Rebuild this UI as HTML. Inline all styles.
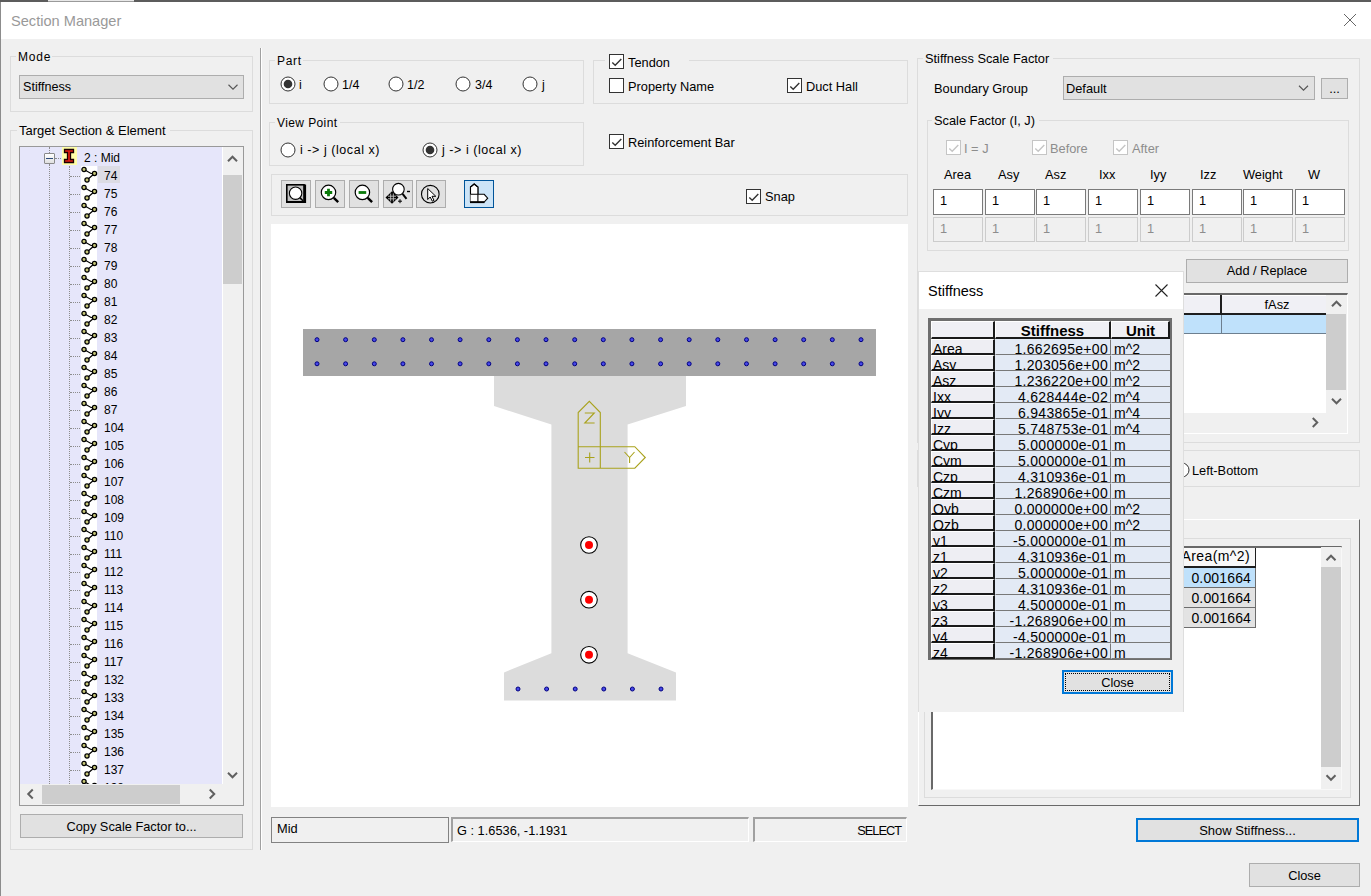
<!DOCTYPE html><html><head><meta charset="utf-8"><style>
html,body{margin:0;padding:0;}
body{width:1371px;height:896px;position:relative;overflow:hidden;background:#f0f0f0;font-family:"Liberation Sans",sans-serif;color:#000;}
.a{position:absolute;}
.t{white-space:nowrap;}
svg{overflow:visible;}
</style></head><body>
<div class="a" style="left:0px;top:0px;width:1371px;height:2px;background:#5c5c5c"></div>
<div class="a" style="left:48px;top:0px;width:86px;height:1px;background:#e8e8e8"></div>
<div class="a" style="left:48px;top:1px;width:86px;height:1px;background:#9a9a9a"></div>
<div class="a" style="left:1px;top:2px;width:1370px;height:37px;background:#fff"></div>
<div class="a" style="left:0px;top:2px;width:1px;height:894px;background:#8c8c8c"></div>
<div class="a t" style="left:11px;top:14px;font-size:14.6px;line-height:14.6px;color:#999;">Section Manager</div>
<svg class="a" style="left:1343px;top:13px" width="14" height="14"><path d="M1,1 L13,13 M13,1 L1,13" stroke="#666" stroke-width="1"/></svg>
<div class="a" style="left:10px;top:56px;width:243px;height:56px;border:1px solid #dcdcdc;box-sizing:border-box;"></div>
<div class="a t" style="left:16px;top:50px;height:12px;width:36px;background:#f0f0f0"></div>
<div class="a t" style="left:18px;top:51px;font-size:12px;line-height:12px;color:#000;letter-spacing:0.8px">Mode</div>
<div class="a" style="left:19px;top:75px;width:225px;height:24px;background:#e1e1e1;border:1px solid #adadad;box-sizing:border-box;"></div>
<div class="a t" style="left:23px;top:81px;font-size:12.6px;line-height:12.6px;color:#000;">Stiffness</div>
<svg class="a" style="left:0;top:0" width="1" height="1"><path d="M228.5,84.75 L233,89.25 L237.5,84.75" fill="none" stroke="#555" stroke-width="1.1"/></svg>
<div class="a" style="left:10px;top:130px;width:243px;height:720px;border:1px solid #dcdcdc;box-sizing:border-box;"></div>
<div class="a t" style="left:17px;top:124px;height:12px;width:153px;background:#f0f0f0"></div>
<div class="a t" style="left:19px;top:124px;font-size:13px;line-height:13px;color:#000;">Target Section &amp; Element</div>
<div class="a" style="left:19px;top:146px;width:225px;height:660px;border:1px solid #999;box-sizing:border-box;background:#f0f0f0"></div>
<div class="a" style="left:20px;top:147px;width:203px;height:637px;background:#fff"></div>
<div class="a" style="left:20px;top:147px;width:202px;height:637px;background:#e6e6fa"></div>
<div class="a" style="left:223px;top:175px;width:19px;height:109px;background:#cdcdcd"></div>
<div class="a" style="left:42px;top:785px;width:138px;height:19px;background:#cdcdcd"></div>
<svg class="a" style="left:0;top:0" width="1" height="1"><path d="M228.0,161.25 L232.5,156.75 L237.0,161.25" fill="none" stroke="#606060" stroke-width="2"/><path d="M228.0,772.75 L232.5,777.25 L237.0,772.75" fill="none" stroke="#606060" stroke-width="2"/><path d="M32.75,789.5 L28.25,794 L32.75,798.5" fill="none" stroke="#606060" stroke-width="2"/><path d="M209.75,789.5 L214.25,794 L209.75,798.5" fill="none" stroke="#606060" stroke-width="2"/></svg>
<div class="a" style="left:20px;top:147px;width:202px;height:637px;overflow:hidden">
<div class="a" style="left:29px;top:0px;width:1px;height:6px;border-left:1px dotted #8c8c8c"></div>
<div class="a" style="left:29px;top:17px;width:1px;height:640px;border-left:1px dotted #8c8c8c"></div>
<div class="a" style="left:49px;top:19px;width:1px;height:640px;border-left:1px dotted #8c8c8c"></div>
<div class="a" style="left:35px;top:11px;width:6px;height:1px;border-top:1px dotted #8c8c8c"></div>
<div class="a" style="left:24px;top:6px;width:11px;height:11px;border:1px solid #8a8a8a;border-radius:1px;box-sizing:border-box;background:linear-gradient(#fff,#e0e0e0)"></div>
<div class="a" style="left:26px;top:11px;width:7px;height:1px;background:#2d4a7a"></div>
<svg class="a" style="left:41px;top:0px" width="17" height="19"><rect x="1" y="0" width="15" height="18" fill="#ffffa8"/><path d="M3.5,2.5 H12.5 V5.5 H9.5 V12.5 H12.5 V15.5 H3.5 V12.5 H6.5 V5.5 H3.5 Z" fill="#e41c10" stroke="#1a0000" stroke-width="1.3"/></svg>
<div class="a t" style="left:64px;top:5px;font-size:12px;line-height:12px">2 : Mid</div>
<div class="a" style="left:50px;top:29px;width:10px;height:1px;border-top:1px dotted #8c8c8c"></div>
<div class="a" style="left:61px;top:19px;width:16px;height:18px;background:#fff"></div>
<svg class="a" style="left:61px;top:19px" width="17" height="17"><path d="M3,3.5 L10,7.5 L13.5,7.5 M13.5,7.5 L6,14" fill="none" stroke="#000" stroke-width="1.2"/><circle cx="3" cy="3.5" r="2.1" fill="#c8c878" stroke="#000" stroke-width="1.3"/><circle cx="13.5" cy="7.5" r="2.1" fill="#c8c878" stroke="#000" stroke-width="1.3"/><circle cx="6" cy="14" r="2.1" fill="#c8c878" stroke="#000" stroke-width="1.3"/></svg>
<div class="a" style="left:78px;top:19px;width:22px;height:17px;background:#dcdce4"></div>
<div class="a t" style="left:84px;top:23px;font-size:12px;line-height:12px">74</div>
<div class="a" style="left:50px;top:47px;width:10px;height:1px;border-top:1px dotted #8c8c8c"></div>
<div class="a" style="left:61px;top:37px;width:16px;height:18px;background:#fff"></div>
<svg class="a" style="left:61px;top:37px" width="17" height="17"><path d="M3,3.5 L10,7.5 L13.5,7.5 M13.5,7.5 L6,14" fill="none" stroke="#000" stroke-width="1.2"/><circle cx="3" cy="3.5" r="2.1" fill="#c8c878" stroke="#000" stroke-width="1.3"/><circle cx="13.5" cy="7.5" r="2.1" fill="#c8c878" stroke="#000" stroke-width="1.3"/><circle cx="6" cy="14" r="2.1" fill="#c8c878" stroke="#000" stroke-width="1.3"/></svg>
<div class="a t" style="left:84px;top:41px;font-size:12px;line-height:12px">75</div>
<div class="a" style="left:50px;top:65px;width:10px;height:1px;border-top:1px dotted #8c8c8c"></div>
<div class="a" style="left:61px;top:55px;width:16px;height:18px;background:#fff"></div>
<svg class="a" style="left:61px;top:55px" width="17" height="17"><path d="M3,3.5 L10,7.5 L13.5,7.5 M13.5,7.5 L6,14" fill="none" stroke="#000" stroke-width="1.2"/><circle cx="3" cy="3.5" r="2.1" fill="#c8c878" stroke="#000" stroke-width="1.3"/><circle cx="13.5" cy="7.5" r="2.1" fill="#c8c878" stroke="#000" stroke-width="1.3"/><circle cx="6" cy="14" r="2.1" fill="#c8c878" stroke="#000" stroke-width="1.3"/></svg>
<div class="a t" style="left:84px;top:59px;font-size:12px;line-height:12px">76</div>
<div class="a" style="left:50px;top:83px;width:10px;height:1px;border-top:1px dotted #8c8c8c"></div>
<div class="a" style="left:61px;top:73px;width:16px;height:18px;background:#fff"></div>
<svg class="a" style="left:61px;top:73px" width="17" height="17"><path d="M3,3.5 L10,7.5 L13.5,7.5 M13.5,7.5 L6,14" fill="none" stroke="#000" stroke-width="1.2"/><circle cx="3" cy="3.5" r="2.1" fill="#c8c878" stroke="#000" stroke-width="1.3"/><circle cx="13.5" cy="7.5" r="2.1" fill="#c8c878" stroke="#000" stroke-width="1.3"/><circle cx="6" cy="14" r="2.1" fill="#c8c878" stroke="#000" stroke-width="1.3"/></svg>
<div class="a t" style="left:84px;top:77px;font-size:12px;line-height:12px">77</div>
<div class="a" style="left:50px;top:101px;width:10px;height:1px;border-top:1px dotted #8c8c8c"></div>
<div class="a" style="left:61px;top:91px;width:16px;height:18px;background:#fff"></div>
<svg class="a" style="left:61px;top:91px" width="17" height="17"><path d="M3,3.5 L10,7.5 L13.5,7.5 M13.5,7.5 L6,14" fill="none" stroke="#000" stroke-width="1.2"/><circle cx="3" cy="3.5" r="2.1" fill="#c8c878" stroke="#000" stroke-width="1.3"/><circle cx="13.5" cy="7.5" r="2.1" fill="#c8c878" stroke="#000" stroke-width="1.3"/><circle cx="6" cy="14" r="2.1" fill="#c8c878" stroke="#000" stroke-width="1.3"/></svg>
<div class="a t" style="left:84px;top:95px;font-size:12px;line-height:12px">78</div>
<div class="a" style="left:50px;top:119px;width:10px;height:1px;border-top:1px dotted #8c8c8c"></div>
<div class="a" style="left:61px;top:109px;width:16px;height:18px;background:#fff"></div>
<svg class="a" style="left:61px;top:109px" width="17" height="17"><path d="M3,3.5 L10,7.5 L13.5,7.5 M13.5,7.5 L6,14" fill="none" stroke="#000" stroke-width="1.2"/><circle cx="3" cy="3.5" r="2.1" fill="#c8c878" stroke="#000" stroke-width="1.3"/><circle cx="13.5" cy="7.5" r="2.1" fill="#c8c878" stroke="#000" stroke-width="1.3"/><circle cx="6" cy="14" r="2.1" fill="#c8c878" stroke="#000" stroke-width="1.3"/></svg>
<div class="a t" style="left:84px;top:113px;font-size:12px;line-height:12px">79</div>
<div class="a" style="left:50px;top:137px;width:10px;height:1px;border-top:1px dotted #8c8c8c"></div>
<div class="a" style="left:61px;top:127px;width:16px;height:18px;background:#fff"></div>
<svg class="a" style="left:61px;top:127px" width="17" height="17"><path d="M3,3.5 L10,7.5 L13.5,7.5 M13.5,7.5 L6,14" fill="none" stroke="#000" stroke-width="1.2"/><circle cx="3" cy="3.5" r="2.1" fill="#c8c878" stroke="#000" stroke-width="1.3"/><circle cx="13.5" cy="7.5" r="2.1" fill="#c8c878" stroke="#000" stroke-width="1.3"/><circle cx="6" cy="14" r="2.1" fill="#c8c878" stroke="#000" stroke-width="1.3"/></svg>
<div class="a t" style="left:84px;top:131px;font-size:12px;line-height:12px">80</div>
<div class="a" style="left:50px;top:155px;width:10px;height:1px;border-top:1px dotted #8c8c8c"></div>
<div class="a" style="left:61px;top:145px;width:16px;height:18px;background:#fff"></div>
<svg class="a" style="left:61px;top:145px" width="17" height="17"><path d="M3,3.5 L10,7.5 L13.5,7.5 M13.5,7.5 L6,14" fill="none" stroke="#000" stroke-width="1.2"/><circle cx="3" cy="3.5" r="2.1" fill="#c8c878" stroke="#000" stroke-width="1.3"/><circle cx="13.5" cy="7.5" r="2.1" fill="#c8c878" stroke="#000" stroke-width="1.3"/><circle cx="6" cy="14" r="2.1" fill="#c8c878" stroke="#000" stroke-width="1.3"/></svg>
<div class="a t" style="left:84px;top:149px;font-size:12px;line-height:12px">81</div>
<div class="a" style="left:50px;top:173px;width:10px;height:1px;border-top:1px dotted #8c8c8c"></div>
<div class="a" style="left:61px;top:163px;width:16px;height:18px;background:#fff"></div>
<svg class="a" style="left:61px;top:163px" width="17" height="17"><path d="M3,3.5 L10,7.5 L13.5,7.5 M13.5,7.5 L6,14" fill="none" stroke="#000" stroke-width="1.2"/><circle cx="3" cy="3.5" r="2.1" fill="#c8c878" stroke="#000" stroke-width="1.3"/><circle cx="13.5" cy="7.5" r="2.1" fill="#c8c878" stroke="#000" stroke-width="1.3"/><circle cx="6" cy="14" r="2.1" fill="#c8c878" stroke="#000" stroke-width="1.3"/></svg>
<div class="a t" style="left:84px;top:167px;font-size:12px;line-height:12px">82</div>
<div class="a" style="left:50px;top:191px;width:10px;height:1px;border-top:1px dotted #8c8c8c"></div>
<div class="a" style="left:61px;top:181px;width:16px;height:18px;background:#fff"></div>
<svg class="a" style="left:61px;top:181px" width="17" height="17"><path d="M3,3.5 L10,7.5 L13.5,7.5 M13.5,7.5 L6,14" fill="none" stroke="#000" stroke-width="1.2"/><circle cx="3" cy="3.5" r="2.1" fill="#c8c878" stroke="#000" stroke-width="1.3"/><circle cx="13.5" cy="7.5" r="2.1" fill="#c8c878" stroke="#000" stroke-width="1.3"/><circle cx="6" cy="14" r="2.1" fill="#c8c878" stroke="#000" stroke-width="1.3"/></svg>
<div class="a t" style="left:84px;top:185px;font-size:12px;line-height:12px">83</div>
<div class="a" style="left:50px;top:209px;width:10px;height:1px;border-top:1px dotted #8c8c8c"></div>
<div class="a" style="left:61px;top:199px;width:16px;height:18px;background:#fff"></div>
<svg class="a" style="left:61px;top:199px" width="17" height="17"><path d="M3,3.5 L10,7.5 L13.5,7.5 M13.5,7.5 L6,14" fill="none" stroke="#000" stroke-width="1.2"/><circle cx="3" cy="3.5" r="2.1" fill="#c8c878" stroke="#000" stroke-width="1.3"/><circle cx="13.5" cy="7.5" r="2.1" fill="#c8c878" stroke="#000" stroke-width="1.3"/><circle cx="6" cy="14" r="2.1" fill="#c8c878" stroke="#000" stroke-width="1.3"/></svg>
<div class="a t" style="left:84px;top:203px;font-size:12px;line-height:12px">84</div>
<div class="a" style="left:50px;top:227px;width:10px;height:1px;border-top:1px dotted #8c8c8c"></div>
<div class="a" style="left:61px;top:217px;width:16px;height:18px;background:#fff"></div>
<svg class="a" style="left:61px;top:217px" width="17" height="17"><path d="M3,3.5 L10,7.5 L13.5,7.5 M13.5,7.5 L6,14" fill="none" stroke="#000" stroke-width="1.2"/><circle cx="3" cy="3.5" r="2.1" fill="#c8c878" stroke="#000" stroke-width="1.3"/><circle cx="13.5" cy="7.5" r="2.1" fill="#c8c878" stroke="#000" stroke-width="1.3"/><circle cx="6" cy="14" r="2.1" fill="#c8c878" stroke="#000" stroke-width="1.3"/></svg>
<div class="a t" style="left:84px;top:221px;font-size:12px;line-height:12px">85</div>
<div class="a" style="left:50px;top:245px;width:10px;height:1px;border-top:1px dotted #8c8c8c"></div>
<div class="a" style="left:61px;top:235px;width:16px;height:18px;background:#fff"></div>
<svg class="a" style="left:61px;top:235px" width="17" height="17"><path d="M3,3.5 L10,7.5 L13.5,7.5 M13.5,7.5 L6,14" fill="none" stroke="#000" stroke-width="1.2"/><circle cx="3" cy="3.5" r="2.1" fill="#c8c878" stroke="#000" stroke-width="1.3"/><circle cx="13.5" cy="7.5" r="2.1" fill="#c8c878" stroke="#000" stroke-width="1.3"/><circle cx="6" cy="14" r="2.1" fill="#c8c878" stroke="#000" stroke-width="1.3"/></svg>
<div class="a t" style="left:84px;top:239px;font-size:12px;line-height:12px">86</div>
<div class="a" style="left:50px;top:263px;width:10px;height:1px;border-top:1px dotted #8c8c8c"></div>
<div class="a" style="left:61px;top:253px;width:16px;height:18px;background:#fff"></div>
<svg class="a" style="left:61px;top:253px" width="17" height="17"><path d="M3,3.5 L10,7.5 L13.5,7.5 M13.5,7.5 L6,14" fill="none" stroke="#000" stroke-width="1.2"/><circle cx="3" cy="3.5" r="2.1" fill="#c8c878" stroke="#000" stroke-width="1.3"/><circle cx="13.5" cy="7.5" r="2.1" fill="#c8c878" stroke="#000" stroke-width="1.3"/><circle cx="6" cy="14" r="2.1" fill="#c8c878" stroke="#000" stroke-width="1.3"/></svg>
<div class="a t" style="left:84px;top:257px;font-size:12px;line-height:12px">87</div>
<div class="a" style="left:50px;top:281px;width:10px;height:1px;border-top:1px dotted #8c8c8c"></div>
<div class="a" style="left:61px;top:271px;width:16px;height:18px;background:#fff"></div>
<svg class="a" style="left:61px;top:271px" width="17" height="17"><path d="M3,3.5 L10,7.5 L13.5,7.5 M13.5,7.5 L6,14" fill="none" stroke="#000" stroke-width="1.2"/><circle cx="3" cy="3.5" r="2.1" fill="#c8c878" stroke="#000" stroke-width="1.3"/><circle cx="13.5" cy="7.5" r="2.1" fill="#c8c878" stroke="#000" stroke-width="1.3"/><circle cx="6" cy="14" r="2.1" fill="#c8c878" stroke="#000" stroke-width="1.3"/></svg>
<div class="a t" style="left:84px;top:275px;font-size:12px;line-height:12px">104</div>
<div class="a" style="left:50px;top:299px;width:10px;height:1px;border-top:1px dotted #8c8c8c"></div>
<div class="a" style="left:61px;top:289px;width:16px;height:18px;background:#fff"></div>
<svg class="a" style="left:61px;top:289px" width="17" height="17"><path d="M3,3.5 L10,7.5 L13.5,7.5 M13.5,7.5 L6,14" fill="none" stroke="#000" stroke-width="1.2"/><circle cx="3" cy="3.5" r="2.1" fill="#c8c878" stroke="#000" stroke-width="1.3"/><circle cx="13.5" cy="7.5" r="2.1" fill="#c8c878" stroke="#000" stroke-width="1.3"/><circle cx="6" cy="14" r="2.1" fill="#c8c878" stroke="#000" stroke-width="1.3"/></svg>
<div class="a t" style="left:84px;top:293px;font-size:12px;line-height:12px">105</div>
<div class="a" style="left:50px;top:317px;width:10px;height:1px;border-top:1px dotted #8c8c8c"></div>
<div class="a" style="left:61px;top:307px;width:16px;height:18px;background:#fff"></div>
<svg class="a" style="left:61px;top:307px" width="17" height="17"><path d="M3,3.5 L10,7.5 L13.5,7.5 M13.5,7.5 L6,14" fill="none" stroke="#000" stroke-width="1.2"/><circle cx="3" cy="3.5" r="2.1" fill="#c8c878" stroke="#000" stroke-width="1.3"/><circle cx="13.5" cy="7.5" r="2.1" fill="#c8c878" stroke="#000" stroke-width="1.3"/><circle cx="6" cy="14" r="2.1" fill="#c8c878" stroke="#000" stroke-width="1.3"/></svg>
<div class="a t" style="left:84px;top:311px;font-size:12px;line-height:12px">106</div>
<div class="a" style="left:50px;top:335px;width:10px;height:1px;border-top:1px dotted #8c8c8c"></div>
<div class="a" style="left:61px;top:325px;width:16px;height:18px;background:#fff"></div>
<svg class="a" style="left:61px;top:325px" width="17" height="17"><path d="M3,3.5 L10,7.5 L13.5,7.5 M13.5,7.5 L6,14" fill="none" stroke="#000" stroke-width="1.2"/><circle cx="3" cy="3.5" r="2.1" fill="#c8c878" stroke="#000" stroke-width="1.3"/><circle cx="13.5" cy="7.5" r="2.1" fill="#c8c878" stroke="#000" stroke-width="1.3"/><circle cx="6" cy="14" r="2.1" fill="#c8c878" stroke="#000" stroke-width="1.3"/></svg>
<div class="a t" style="left:84px;top:329px;font-size:12px;line-height:12px">107</div>
<div class="a" style="left:50px;top:353px;width:10px;height:1px;border-top:1px dotted #8c8c8c"></div>
<div class="a" style="left:61px;top:343px;width:16px;height:18px;background:#fff"></div>
<svg class="a" style="left:61px;top:343px" width="17" height="17"><path d="M3,3.5 L10,7.5 L13.5,7.5 M13.5,7.5 L6,14" fill="none" stroke="#000" stroke-width="1.2"/><circle cx="3" cy="3.5" r="2.1" fill="#c8c878" stroke="#000" stroke-width="1.3"/><circle cx="13.5" cy="7.5" r="2.1" fill="#c8c878" stroke="#000" stroke-width="1.3"/><circle cx="6" cy="14" r="2.1" fill="#c8c878" stroke="#000" stroke-width="1.3"/></svg>
<div class="a t" style="left:84px;top:347px;font-size:12px;line-height:12px">108</div>
<div class="a" style="left:50px;top:371px;width:10px;height:1px;border-top:1px dotted #8c8c8c"></div>
<div class="a" style="left:61px;top:361px;width:16px;height:18px;background:#fff"></div>
<svg class="a" style="left:61px;top:361px" width="17" height="17"><path d="M3,3.5 L10,7.5 L13.5,7.5 M13.5,7.5 L6,14" fill="none" stroke="#000" stroke-width="1.2"/><circle cx="3" cy="3.5" r="2.1" fill="#c8c878" stroke="#000" stroke-width="1.3"/><circle cx="13.5" cy="7.5" r="2.1" fill="#c8c878" stroke="#000" stroke-width="1.3"/><circle cx="6" cy="14" r="2.1" fill="#c8c878" stroke="#000" stroke-width="1.3"/></svg>
<div class="a t" style="left:84px;top:365px;font-size:12px;line-height:12px">109</div>
<div class="a" style="left:50px;top:389px;width:10px;height:1px;border-top:1px dotted #8c8c8c"></div>
<div class="a" style="left:61px;top:379px;width:16px;height:18px;background:#fff"></div>
<svg class="a" style="left:61px;top:379px" width="17" height="17"><path d="M3,3.5 L10,7.5 L13.5,7.5 M13.5,7.5 L6,14" fill="none" stroke="#000" stroke-width="1.2"/><circle cx="3" cy="3.5" r="2.1" fill="#c8c878" stroke="#000" stroke-width="1.3"/><circle cx="13.5" cy="7.5" r="2.1" fill="#c8c878" stroke="#000" stroke-width="1.3"/><circle cx="6" cy="14" r="2.1" fill="#c8c878" stroke="#000" stroke-width="1.3"/></svg>
<div class="a t" style="left:84px;top:383px;font-size:12px;line-height:12px">110</div>
<div class="a" style="left:50px;top:407px;width:10px;height:1px;border-top:1px dotted #8c8c8c"></div>
<div class="a" style="left:61px;top:397px;width:16px;height:18px;background:#fff"></div>
<svg class="a" style="left:61px;top:397px" width="17" height="17"><path d="M3,3.5 L10,7.5 L13.5,7.5 M13.5,7.5 L6,14" fill="none" stroke="#000" stroke-width="1.2"/><circle cx="3" cy="3.5" r="2.1" fill="#c8c878" stroke="#000" stroke-width="1.3"/><circle cx="13.5" cy="7.5" r="2.1" fill="#c8c878" stroke="#000" stroke-width="1.3"/><circle cx="6" cy="14" r="2.1" fill="#c8c878" stroke="#000" stroke-width="1.3"/></svg>
<div class="a t" style="left:84px;top:401px;font-size:12px;line-height:12px">111</div>
<div class="a" style="left:50px;top:425px;width:10px;height:1px;border-top:1px dotted #8c8c8c"></div>
<div class="a" style="left:61px;top:415px;width:16px;height:18px;background:#fff"></div>
<svg class="a" style="left:61px;top:415px" width="17" height="17"><path d="M3,3.5 L10,7.5 L13.5,7.5 M13.5,7.5 L6,14" fill="none" stroke="#000" stroke-width="1.2"/><circle cx="3" cy="3.5" r="2.1" fill="#c8c878" stroke="#000" stroke-width="1.3"/><circle cx="13.5" cy="7.5" r="2.1" fill="#c8c878" stroke="#000" stroke-width="1.3"/><circle cx="6" cy="14" r="2.1" fill="#c8c878" stroke="#000" stroke-width="1.3"/></svg>
<div class="a t" style="left:84px;top:419px;font-size:12px;line-height:12px">112</div>
<div class="a" style="left:50px;top:443px;width:10px;height:1px;border-top:1px dotted #8c8c8c"></div>
<div class="a" style="left:61px;top:433px;width:16px;height:18px;background:#fff"></div>
<svg class="a" style="left:61px;top:433px" width="17" height="17"><path d="M3,3.5 L10,7.5 L13.5,7.5 M13.5,7.5 L6,14" fill="none" stroke="#000" stroke-width="1.2"/><circle cx="3" cy="3.5" r="2.1" fill="#c8c878" stroke="#000" stroke-width="1.3"/><circle cx="13.5" cy="7.5" r="2.1" fill="#c8c878" stroke="#000" stroke-width="1.3"/><circle cx="6" cy="14" r="2.1" fill="#c8c878" stroke="#000" stroke-width="1.3"/></svg>
<div class="a t" style="left:84px;top:437px;font-size:12px;line-height:12px">113</div>
<div class="a" style="left:50px;top:461px;width:10px;height:1px;border-top:1px dotted #8c8c8c"></div>
<div class="a" style="left:61px;top:451px;width:16px;height:18px;background:#fff"></div>
<svg class="a" style="left:61px;top:451px" width="17" height="17"><path d="M3,3.5 L10,7.5 L13.5,7.5 M13.5,7.5 L6,14" fill="none" stroke="#000" stroke-width="1.2"/><circle cx="3" cy="3.5" r="2.1" fill="#c8c878" stroke="#000" stroke-width="1.3"/><circle cx="13.5" cy="7.5" r="2.1" fill="#c8c878" stroke="#000" stroke-width="1.3"/><circle cx="6" cy="14" r="2.1" fill="#c8c878" stroke="#000" stroke-width="1.3"/></svg>
<div class="a t" style="left:84px;top:455px;font-size:12px;line-height:12px">114</div>
<div class="a" style="left:50px;top:479px;width:10px;height:1px;border-top:1px dotted #8c8c8c"></div>
<div class="a" style="left:61px;top:469px;width:16px;height:18px;background:#fff"></div>
<svg class="a" style="left:61px;top:469px" width="17" height="17"><path d="M3,3.5 L10,7.5 L13.5,7.5 M13.5,7.5 L6,14" fill="none" stroke="#000" stroke-width="1.2"/><circle cx="3" cy="3.5" r="2.1" fill="#c8c878" stroke="#000" stroke-width="1.3"/><circle cx="13.5" cy="7.5" r="2.1" fill="#c8c878" stroke="#000" stroke-width="1.3"/><circle cx="6" cy="14" r="2.1" fill="#c8c878" stroke="#000" stroke-width="1.3"/></svg>
<div class="a t" style="left:84px;top:473px;font-size:12px;line-height:12px">115</div>
<div class="a" style="left:50px;top:497px;width:10px;height:1px;border-top:1px dotted #8c8c8c"></div>
<div class="a" style="left:61px;top:487px;width:16px;height:18px;background:#fff"></div>
<svg class="a" style="left:61px;top:487px" width="17" height="17"><path d="M3,3.5 L10,7.5 L13.5,7.5 M13.5,7.5 L6,14" fill="none" stroke="#000" stroke-width="1.2"/><circle cx="3" cy="3.5" r="2.1" fill="#c8c878" stroke="#000" stroke-width="1.3"/><circle cx="13.5" cy="7.5" r="2.1" fill="#c8c878" stroke="#000" stroke-width="1.3"/><circle cx="6" cy="14" r="2.1" fill="#c8c878" stroke="#000" stroke-width="1.3"/></svg>
<div class="a t" style="left:84px;top:491px;font-size:12px;line-height:12px">116</div>
<div class="a" style="left:50px;top:515px;width:10px;height:1px;border-top:1px dotted #8c8c8c"></div>
<div class="a" style="left:61px;top:505px;width:16px;height:18px;background:#fff"></div>
<svg class="a" style="left:61px;top:505px" width="17" height="17"><path d="M3,3.5 L10,7.5 L13.5,7.5 M13.5,7.5 L6,14" fill="none" stroke="#000" stroke-width="1.2"/><circle cx="3" cy="3.5" r="2.1" fill="#c8c878" stroke="#000" stroke-width="1.3"/><circle cx="13.5" cy="7.5" r="2.1" fill="#c8c878" stroke="#000" stroke-width="1.3"/><circle cx="6" cy="14" r="2.1" fill="#c8c878" stroke="#000" stroke-width="1.3"/></svg>
<div class="a t" style="left:84px;top:509px;font-size:12px;line-height:12px">117</div>
<div class="a" style="left:50px;top:533px;width:10px;height:1px;border-top:1px dotted #8c8c8c"></div>
<div class="a" style="left:61px;top:523px;width:16px;height:18px;background:#fff"></div>
<svg class="a" style="left:61px;top:523px" width="17" height="17"><path d="M3,3.5 L10,7.5 L13.5,7.5 M13.5,7.5 L6,14" fill="none" stroke="#000" stroke-width="1.2"/><circle cx="3" cy="3.5" r="2.1" fill="#c8c878" stroke="#000" stroke-width="1.3"/><circle cx="13.5" cy="7.5" r="2.1" fill="#c8c878" stroke="#000" stroke-width="1.3"/><circle cx="6" cy="14" r="2.1" fill="#c8c878" stroke="#000" stroke-width="1.3"/></svg>
<div class="a t" style="left:84px;top:527px;font-size:12px;line-height:12px">132</div>
<div class="a" style="left:50px;top:551px;width:10px;height:1px;border-top:1px dotted #8c8c8c"></div>
<div class="a" style="left:61px;top:541px;width:16px;height:18px;background:#fff"></div>
<svg class="a" style="left:61px;top:541px" width="17" height="17"><path d="M3,3.5 L10,7.5 L13.5,7.5 M13.5,7.5 L6,14" fill="none" stroke="#000" stroke-width="1.2"/><circle cx="3" cy="3.5" r="2.1" fill="#c8c878" stroke="#000" stroke-width="1.3"/><circle cx="13.5" cy="7.5" r="2.1" fill="#c8c878" stroke="#000" stroke-width="1.3"/><circle cx="6" cy="14" r="2.1" fill="#c8c878" stroke="#000" stroke-width="1.3"/></svg>
<div class="a t" style="left:84px;top:545px;font-size:12px;line-height:12px">133</div>
<div class="a" style="left:50px;top:569px;width:10px;height:1px;border-top:1px dotted #8c8c8c"></div>
<div class="a" style="left:61px;top:559px;width:16px;height:18px;background:#fff"></div>
<svg class="a" style="left:61px;top:559px" width="17" height="17"><path d="M3,3.5 L10,7.5 L13.5,7.5 M13.5,7.5 L6,14" fill="none" stroke="#000" stroke-width="1.2"/><circle cx="3" cy="3.5" r="2.1" fill="#c8c878" stroke="#000" stroke-width="1.3"/><circle cx="13.5" cy="7.5" r="2.1" fill="#c8c878" stroke="#000" stroke-width="1.3"/><circle cx="6" cy="14" r="2.1" fill="#c8c878" stroke="#000" stroke-width="1.3"/></svg>
<div class="a t" style="left:84px;top:563px;font-size:12px;line-height:12px">134</div>
<div class="a" style="left:50px;top:587px;width:10px;height:1px;border-top:1px dotted #8c8c8c"></div>
<div class="a" style="left:61px;top:577px;width:16px;height:18px;background:#fff"></div>
<svg class="a" style="left:61px;top:577px" width="17" height="17"><path d="M3,3.5 L10,7.5 L13.5,7.5 M13.5,7.5 L6,14" fill="none" stroke="#000" stroke-width="1.2"/><circle cx="3" cy="3.5" r="2.1" fill="#c8c878" stroke="#000" stroke-width="1.3"/><circle cx="13.5" cy="7.5" r="2.1" fill="#c8c878" stroke="#000" stroke-width="1.3"/><circle cx="6" cy="14" r="2.1" fill="#c8c878" stroke="#000" stroke-width="1.3"/></svg>
<div class="a t" style="left:84px;top:581px;font-size:12px;line-height:12px">135</div>
<div class="a" style="left:50px;top:605px;width:10px;height:1px;border-top:1px dotted #8c8c8c"></div>
<div class="a" style="left:61px;top:595px;width:16px;height:18px;background:#fff"></div>
<svg class="a" style="left:61px;top:595px" width="17" height="17"><path d="M3,3.5 L10,7.5 L13.5,7.5 M13.5,7.5 L6,14" fill="none" stroke="#000" stroke-width="1.2"/><circle cx="3" cy="3.5" r="2.1" fill="#c8c878" stroke="#000" stroke-width="1.3"/><circle cx="13.5" cy="7.5" r="2.1" fill="#c8c878" stroke="#000" stroke-width="1.3"/><circle cx="6" cy="14" r="2.1" fill="#c8c878" stroke="#000" stroke-width="1.3"/></svg>
<div class="a t" style="left:84px;top:599px;font-size:12px;line-height:12px">136</div>
<div class="a" style="left:50px;top:623px;width:10px;height:1px;border-top:1px dotted #8c8c8c"></div>
<div class="a" style="left:61px;top:613px;width:16px;height:18px;background:#fff"></div>
<svg class="a" style="left:61px;top:613px" width="17" height="17"><path d="M3,3.5 L10,7.5 L13.5,7.5 M13.5,7.5 L6,14" fill="none" stroke="#000" stroke-width="1.2"/><circle cx="3" cy="3.5" r="2.1" fill="#c8c878" stroke="#000" stroke-width="1.3"/><circle cx="13.5" cy="7.5" r="2.1" fill="#c8c878" stroke="#000" stroke-width="1.3"/><circle cx="6" cy="14" r="2.1" fill="#c8c878" stroke="#000" stroke-width="1.3"/></svg>
<div class="a t" style="left:84px;top:617px;font-size:12px;line-height:12px">137</div>
<div class="a" style="left:50px;top:641px;width:10px;height:1px;border-top:1px dotted #8c8c8c"></div>
<div class="a" style="left:61px;top:631px;width:16px;height:18px;background:#fff"></div>
<svg class="a" style="left:61px;top:631px" width="17" height="17"><path d="M3,3.5 L10,7.5 L13.5,7.5 M13.5,7.5 L6,14" fill="none" stroke="#000" stroke-width="1.2"/><circle cx="3" cy="3.5" r="2.1" fill="#c8c878" stroke="#000" stroke-width="1.3"/><circle cx="13.5" cy="7.5" r="2.1" fill="#c8c878" stroke="#000" stroke-width="1.3"/><circle cx="6" cy="14" r="2.1" fill="#c8c878" stroke="#000" stroke-width="1.3"/></svg>
<div class="a t" style="left:84px;top:635px;font-size:12px;line-height:12px">138</div>
</div>
<div class="a" style="left:20px;top:814px;width:223px;height:24px;background:#e1e1e1;border:1px solid #adadad;box-sizing:border-box;"></div>
<div class="a t" style="left:20px;top:821px;font-size:12.8px;line-height:12.8px;color:#000;width:223px;text-align:center;">Copy Scale Factor to...</div>
<div class="a" style="left:260px;top:48px;width:1px;height:802px;background:#a0a0a0"></div>
<div class="a" style="left:261px;top:48px;width:1px;height:802px;background:#fff"></div>
<div class="a" style="left:269px;top:60px;width:315px;height:44px;border:1px solid #dcdcdc;box-sizing:border-box;"></div>
<div class="a t" style="left:275px;top:54px;height:12px;width:28px;background:#f0f0f0"></div>
<div class="a t" style="left:277px;top:55px;font-size:12px;line-height:12px;color:#000;letter-spacing:0.7px">Part</div>
<svg class="a" style="left:279.5px;top:75.5px" width="16" height="16"><circle cx="8" cy="8" r="7" fill="#fff" stroke="#333" stroke-width="1"/><circle cx="8" cy="8" r="4.3" fill="#333"/></svg>
<div class="a t" style="left:299px;top:79px;font-size:12.5px;line-height:12.5px;color:#000;">i</div>
<svg class="a" style="left:322.5px;top:75.5px" width="16" height="16"><circle cx="8" cy="8" r="7" fill="#fff" stroke="#333" stroke-width="1"/></svg>
<div class="a t" style="left:342px;top:79px;font-size:12.5px;line-height:12.5px;color:#000;">1/4</div>
<svg class="a" style="left:387.5px;top:75.5px" width="16" height="16"><circle cx="8" cy="8" r="7" fill="#fff" stroke="#333" stroke-width="1"/></svg>
<div class="a t" style="left:407px;top:79px;font-size:12.5px;line-height:12.5px;color:#000;">1/2</div>
<svg class="a" style="left:455px;top:75.5px" width="16" height="16"><circle cx="8" cy="8" r="7" fill="#fff" stroke="#333" stroke-width="1"/></svg>
<div class="a t" style="left:475px;top:79px;font-size:12.5px;line-height:12.5px;color:#000;">3/4</div>
<svg class="a" style="left:522px;top:75.5px" width="16" height="16"><circle cx="8" cy="8" r="7" fill="#fff" stroke="#333" stroke-width="1"/></svg>
<div class="a t" style="left:542px;top:79px;font-size:12.5px;line-height:12.5px;color:#000;">j</div>
<div class="a" style="left:269px;top:122px;width:315px;height:44px;border:1px solid #dcdcdc;box-sizing:border-box;"></div>
<div class="a t" style="left:275px;top:116px;height:12px;width:65px;background:#f0f0f0"></div>
<div class="a t" style="left:277px;top:117px;font-size:12px;line-height:12px;color:#000;letter-spacing:0.4px">View Point</div>
<svg class="a" style="left:279.5px;top:141.5px" width="16" height="16"><circle cx="8" cy="8" r="7" fill="#fff" stroke="#333" stroke-width="1"/></svg>
<div class="a t" style="left:300px;top:144px;font-size:12.5px;line-height:12.5px;color:#000;letter-spacing:0.55px">i -&gt; j (local x)</div>
<svg class="a" style="left:422px;top:141.5px" width="16" height="16"><circle cx="8" cy="8" r="7" fill="#fff" stroke="#333" stroke-width="1"/><circle cx="8" cy="8" r="4.3" fill="#333"/></svg>
<div class="a t" style="left:442px;top:144px;font-size:12.5px;line-height:12.5px;color:#000;letter-spacing:0.55px">j -&gt; i (local x)</div>
<div class="a" style="left:593px;top:60px;width:315px;height:44px;border:1px solid #dcdcdc;box-sizing:border-box;"></div>
<div class="a" style="left:605px;top:55px;width:84px;height:12px;background:#f0f0f0"></div>
<div class="a" style="left:609px;top:54px;width:15px;height:15px;background:#fff;border:1px solid #333;box-sizing:border-box;"></div>
<svg class="a" style="left:609px;top:54px" width="15" height="15"><path d="M3.3,8.6 L6.2,11.2 L12.3,4.9" fill="none" stroke="#333" stroke-width="1.4"/></svg>
<div class="a t" style="left:628px;top:57px;font-size:12.8px;line-height:12.8px;color:#000;">Tendon</div>
<div class="a" style="left:609px;top:78px;width:15px;height:15px;background:#fff;border:1px solid #333;box-sizing:border-box;"></div>
<div class="a t" style="left:628px;top:81px;font-size:12.8px;line-height:12.8px;color:#000;">Property Name</div>
<div class="a" style="left:787px;top:78px;width:15px;height:15px;background:#fff;border:1px solid #333;box-sizing:border-box;"></div>
<svg class="a" style="left:787px;top:78px" width="15" height="15"><path d="M3.3,8.6 L6.2,11.2 L12.3,4.9" fill="none" stroke="#333" stroke-width="1.4"/></svg>
<div class="a t" style="left:806px;top:81px;font-size:12.8px;line-height:12.8px;color:#000;">Duct Hall</div>
<div class="a" style="left:609px;top:134px;width:15px;height:15px;background:#fff;border:1px solid #333;box-sizing:border-box;"></div>
<svg class="a" style="left:609px;top:134px" width="15" height="15"><path d="M3.3,8.6 L6.2,11.2 L12.3,4.9" fill="none" stroke="#333" stroke-width="1.4"/></svg>
<div class="a t" style="left:628px;top:137px;font-size:12.8px;line-height:12.8px;color:#000;">Reinforcement Bar</div>
<div class="a" style="left:271px;top:174px;width:637px;height:42px;border:1px solid #dcdcdc;box-sizing:border-box;"></div>
<div class="a" style="left:281px;top:180px;width:30px;height:28px;background:#e1e1e1;border:1px solid #adadad;box-sizing:border-box;"></div>
<div class="a" style="left:315px;top:180px;width:30px;height:28px;background:#e1e1e1;border:1px solid #adadad;box-sizing:border-box;"></div>
<div class="a" style="left:349px;top:180px;width:30px;height:28px;background:#e1e1e1;border:1px solid #adadad;box-sizing:border-box;"></div>
<div class="a" style="left:383px;top:180px;width:30px;height:28px;background:#e1e1e1;border:1px solid #adadad;box-sizing:border-box;"></div>
<div class="a" style="left:416px;top:180px;width:30px;height:28px;background:#e1e1e1;border:1px solid #adadad;box-sizing:border-box;"></div>
<div class="a" style="left:464px;top:180px;width:30px;height:28px;background:#cce4f7;border:1px solid #005499;box-sizing:border-box;"></div>
<svg class="a" style="left:0;top:0" width="1" height="1"><rect x="286.8" y="184.8" width="17.2" height="17" fill="#c0c0c0" stroke="#000" stroke-width="1.6"/><path d="M286,202 H305 V184.5" fill="none" stroke="#000" stroke-width="2.2"/><circle cx="295.6" cy="193.2" r="6.2" fill="#fff" stroke="#000" stroke-width="1.1"/><path d="M299.8,197.6 L303,200.8" stroke="#000" stroke-width="1.6"/><circle cx="328.5" cy="192.4" r="7.2" fill="#fff" stroke="#000" stroke-width="1.2"/><path d="M333.8,197.8 L338.2,202.2" stroke="#000" stroke-width="2.4"/><path d="M324.8,192.5 H332.2 M328.5,188.8 V196.2" stroke="#0a7a0a" stroke-width="2.8"/><circle cx="362.4" cy="192.4" r="7.2" fill="#fff" stroke="#000" stroke-width="1.2"/><path d="M367.7,197.8 L372.1,202.2" stroke="#000" stroke-width="2.4"/><path d="M358.6,192.5 H366.2" stroke="#0a7a0a" stroke-width="2.8"/><circle cx="398.4" cy="189.2" r="5.8" fill="#fff" stroke="#000" stroke-width="1.1"/><path d="M402.6,193.8 L406.5,198.8" stroke="#000" stroke-width="2"/><path d="M407,191.5 H410" stroke="#000" stroke-width="1.4"/><path d="M385.5,197.5 L392,191.2 L398.5,197.5 L392,203.8 Z" fill="#000"/><path d="M388,196.2 H396 M388,198.8 H396 M390.7,193.5 V201.5 M393.3,193.5 V201.5" stroke="#c8c8c8" stroke-width="0.9"/><path d="M398,201.2 H402 M400,199.2 V203.2" stroke="#000" stroke-width="1"/><circle cx="430.3" cy="194.2" r="8.8" fill="none" stroke="#000" stroke-width="1.1"/><path d="M427.7,188.5 L427.7,199.5 L430.2,197 L432.3,201.2 L434,200.4 L432,196.3 L435.8,196.3 Z" fill="#fff" stroke="#000" stroke-width="1"/><path d="M470.5,202 V187 L474.2,184 L477.9,187 V194.3" fill="#fff" stroke="#000" stroke-width="1.1"/><rect x="470.5" y="187" width="7.4" height="15" fill="#fff"/><path d="M470.5,202 V187 L474.2,184 L477.9,187 V202" fill="none" stroke="#000" stroke-width="1.1"/><path d="M470.5,194.3 H484.2 L487.7,198.2 L484.2,202 H470.5" fill="#fff" stroke="#000" stroke-width="1.1"/><path d="M477.9,194.3 V202.5" stroke="#000" stroke-width="1.1"/><path d="M470,202.2 H484.5" stroke="#000" stroke-width="1.8"/></svg>
<div class="a" style="left:746px;top:189px;width:15px;height:15px;background:#fff;border:1px solid #333;box-sizing:border-box;"></div>
<svg class="a" style="left:746px;top:189px" width="15" height="15"><path d="M3.3,8.6 L6.2,11.2 L12.3,4.9" fill="none" stroke="#333" stroke-width="1.4"/></svg>
<div class="a t" style="left:765px;top:191px;font-size:12.8px;line-height:12.8px;color:#000;">Snap</div>
<div class="a" style="left:271px;top:224px;width:637px;height:583px;background:#fff"></div>
<svg class="a" style="left:0;top:0" width="1371" height="896"><rect x="303" y="329" width="573" height="47" fill="#a6a6a6"/><path d="M494,376 H686 V406 L627.6,424.6 V653.2 L676,672.4 V700.5 H504 V672.4 L551.4,653.2 V424.6 L494,406 Z" fill="#dcdcdc"/><circle cx="317.0" cy="339.7" r="2" fill="#4848e8" stroke="#000080" stroke-width="1"/><circle cx="345.6" cy="339.7" r="2" fill="#4848e8" stroke="#000080" stroke-width="1"/><circle cx="374.3" cy="339.7" r="2" fill="#4848e8" stroke="#000080" stroke-width="1"/><circle cx="402.9" cy="339.7" r="2" fill="#4848e8" stroke="#000080" stroke-width="1"/><circle cx="431.5" cy="339.7" r="2" fill="#4848e8" stroke="#000080" stroke-width="1"/><circle cx="460.1" cy="339.7" r="2" fill="#4848e8" stroke="#000080" stroke-width="1"/><circle cx="488.8" cy="339.7" r="2" fill="#4848e8" stroke="#000080" stroke-width="1"/><circle cx="517.4" cy="339.7" r="2" fill="#4848e8" stroke="#000080" stroke-width="1"/><circle cx="546.0" cy="339.7" r="2" fill="#4848e8" stroke="#000080" stroke-width="1"/><circle cx="574.7" cy="339.7" r="2" fill="#4848e8" stroke="#000080" stroke-width="1"/><circle cx="603.3" cy="339.7" r="2" fill="#4848e8" stroke="#000080" stroke-width="1"/><circle cx="631.9" cy="339.7" r="2" fill="#4848e8" stroke="#000080" stroke-width="1"/><circle cx="660.6" cy="339.7" r="2" fill="#4848e8" stroke="#000080" stroke-width="1"/><circle cx="689.2" cy="339.7" r="2" fill="#4848e8" stroke="#000080" stroke-width="1"/><circle cx="717.8" cy="339.7" r="2" fill="#4848e8" stroke="#000080" stroke-width="1"/><circle cx="746.5" cy="339.7" r="2" fill="#4848e8" stroke="#000080" stroke-width="1"/><circle cx="775.1" cy="339.7" r="2" fill="#4848e8" stroke="#000080" stroke-width="1"/><circle cx="803.7" cy="339.7" r="2" fill="#4848e8" stroke="#000080" stroke-width="1"/><circle cx="832.3" cy="339.7" r="2" fill="#4848e8" stroke="#000080" stroke-width="1"/><circle cx="861.0" cy="339.7" r="2" fill="#4848e8" stroke="#000080" stroke-width="1"/><circle cx="317.0" cy="363.8" r="2" fill="#4848e8" stroke="#000080" stroke-width="1"/><circle cx="345.6" cy="363.8" r="2" fill="#4848e8" stroke="#000080" stroke-width="1"/><circle cx="374.3" cy="363.8" r="2" fill="#4848e8" stroke="#000080" stroke-width="1"/><circle cx="402.9" cy="363.8" r="2" fill="#4848e8" stroke="#000080" stroke-width="1"/><circle cx="431.5" cy="363.8" r="2" fill="#4848e8" stroke="#000080" stroke-width="1"/><circle cx="460.1" cy="363.8" r="2" fill="#4848e8" stroke="#000080" stroke-width="1"/><circle cx="488.8" cy="363.8" r="2" fill="#4848e8" stroke="#000080" stroke-width="1"/><circle cx="517.4" cy="363.8" r="2" fill="#4848e8" stroke="#000080" stroke-width="1"/><circle cx="546.0" cy="363.8" r="2" fill="#4848e8" stroke="#000080" stroke-width="1"/><circle cx="574.7" cy="363.8" r="2" fill="#4848e8" stroke="#000080" stroke-width="1"/><circle cx="603.3" cy="363.8" r="2" fill="#4848e8" stroke="#000080" stroke-width="1"/><circle cx="631.9" cy="363.8" r="2" fill="#4848e8" stroke="#000080" stroke-width="1"/><circle cx="660.6" cy="363.8" r="2" fill="#4848e8" stroke="#000080" stroke-width="1"/><circle cx="689.2" cy="363.8" r="2" fill="#4848e8" stroke="#000080" stroke-width="1"/><circle cx="717.8" cy="363.8" r="2" fill="#4848e8" stroke="#000080" stroke-width="1"/><circle cx="746.5" cy="363.8" r="2" fill="#4848e8" stroke="#000080" stroke-width="1"/><circle cx="775.1" cy="363.8" r="2" fill="#4848e8" stroke="#000080" stroke-width="1"/><circle cx="803.7" cy="363.8" r="2" fill="#4848e8" stroke="#000080" stroke-width="1"/><circle cx="832.3" cy="363.8" r="2" fill="#4848e8" stroke="#000080" stroke-width="1"/><circle cx="861.0" cy="363.8" r="2" fill="#4848e8" stroke="#000080" stroke-width="1"/><circle cx="518.0" cy="689" r="2" fill="#4848e8" stroke="#000080" stroke-width="1"/><circle cx="546.6" cy="689" r="2" fill="#4848e8" stroke="#000080" stroke-width="1"/><circle cx="575.2" cy="689" r="2" fill="#4848e8" stroke="#000080" stroke-width="1"/><circle cx="603.8" cy="689" r="2" fill="#4848e8" stroke="#000080" stroke-width="1"/><circle cx="632.4" cy="689" r="2" fill="#4848e8" stroke="#000080" stroke-width="1"/><circle cx="661.0" cy="689" r="2" fill="#4848e8" stroke="#000080" stroke-width="1"/><circle cx="589" cy="545" r="8.3" fill="#fff" stroke="#000" stroke-width="1.1"/><circle cx="589" cy="545" r="4" fill="#ff0000"/><circle cx="589" cy="599.7" r="8.3" fill="#fff" stroke="#000" stroke-width="1.1"/><circle cx="589" cy="599.7" r="4" fill="#ff0000"/><circle cx="589" cy="654.8" r="8.3" fill="#fff" stroke="#000" stroke-width="1.1"/><circle cx="589" cy="654.8" r="4" fill="#ff0000"/><path d="M578.2,468.2 V412.5 L589.3,401.3 L600.3,412.5 V468.2 Z M578.2,446.7 H634.8 L645.3,457.5 L634.8,468.2 H578.2 M600.3,446.7 V468.2" fill="none" stroke="#a9a21c" stroke-width="1.1"/><path d="M585,457.5 H594.5 M589.7,452.5 V462.5" stroke="#a9a21c" stroke-width="1.1"/><path d="M584.8,413 H594.3 L584.8,423 H594.6" fill="none" stroke="#a9a21c" stroke-width="1.1"/><path d="M624.5,452 L629.6,457.5 L634.5,452 M629.6,457.5 V463" fill="none" stroke="#a9a21c" stroke-width="1.1"/></svg>
<div class="a" style="left:271px;top:817px;width:178px;height:26px;border:1px solid #828282;box-sizing:border-box;"></div>
<div class="a t" style="left:277px;top:823px;font-size:12.8px;line-height:12.8px;color:#000;">Mid</div>
<div class="a" style="left:451px;top:817px;width:298px;height:25px;border-top:2px solid #a0a0a0;border-left:2px solid #a0a0a0;border-bottom:1px solid #fff;border-right:1px solid #fff;box-sizing:border-box;"></div>
<div class="a t" style="left:457px;top:825px;font-size:12.8px;line-height:12.8px;color:#000;">G : 1.6536, -1.1931</div>
<div class="a" style="left:753px;top:817px;width:154px;height:25px;border-top:2px solid #a0a0a0;border-left:2px solid #a0a0a0;border-bottom:1px solid #fff;border-right:1px solid #fff;box-sizing:border-box;"></div>
<div class="a t" style="left:753px;top:825px;font-size:12.8px;line-height:12.8px;color:#000;width:148px;text-align:right;letter-spacing:-1px">SELECT</div>
<div class="a" style="left:917px;top:58px;width:443px;height:385px;border:1px solid #dcdcdc;box-sizing:border-box;"></div>
<div class="a t" style="left:923px;top:52px;height:12px;width:130px;background:#f0f0f0"></div>
<div class="a t" style="left:925px;top:53px;font-size:12.8px;line-height:12.8px;color:#000;">Stiffness Scale Factor</div>
<div class="a t" style="left:934px;top:83px;font-size:12.8px;line-height:12.8px;color:#000;">Boundary Group</div>
<div class="a" style="left:1063px;top:76px;width:252px;height:24px;background:#e1e1e1;border:1px solid #adadad;box-sizing:border-box;"></div>
<div class="a t" style="left:1066px;top:83px;font-size:12.8px;line-height:12.8px;color:#000;">Default</div>
<svg class="a" style="left:0;top:0" width="1" height="1"><path d="M1299.0,85.75 L1303.5,90.25 L1308.0,85.75" fill="none" stroke="#555" stroke-width="1.1"/></svg>
<div class="a" style="left:1321px;top:78px;width:27px;height:21px;background:#e1e1e1;border:1px solid #adadad;box-sizing:border-box;"></div>
<div class="a t" style="left:1321px;top:83px;font-size:12.8px;line-height:12.8px;color:#000;width:27px;text-align:center;">...</div>
<div class="a" style="left:927px;top:120px;width:422px;height:131px;border:1px solid #dcdcdc;box-sizing:border-box;"></div>
<div class="a t" style="left:932px;top:114px;height:12px;width:107px;background:#f0f0f0"></div>
<div class="a t" style="left:934px;top:115px;font-size:12.8px;line-height:12.8px;color:#000;">Scale Factor (I, J)</div>
<div class="a" style="left:946px;top:140px;width:15px;height:15px;background:#fff;border:1px solid #c5c5c5;box-sizing:border-box;"></div>
<svg class="a" style="left:946px;top:140px" width="15" height="15"><path d="M3.3,8.6 L6.2,11.2 L12.3,4.9" fill="none" stroke="#c5c5c5" stroke-width="1.4"/></svg>
<div class="a t" style="left:964px;top:143px;font-size:12.8px;line-height:12.8px;color:#8d8d8d;">I = J</div>
<div class="a" style="left:1032px;top:140px;width:15px;height:15px;background:#fff;border:1px solid #c5c5c5;box-sizing:border-box;"></div>
<svg class="a" style="left:1032px;top:140px" width="15" height="15"><path d="M3.3,8.6 L6.2,11.2 L12.3,4.9" fill="none" stroke="#c5c5c5" stroke-width="1.4"/></svg>
<div class="a t" style="left:1050px;top:143px;font-size:12.8px;line-height:12.8px;color:#8d8d8d;">Before</div>
<div class="a" style="left:1113px;top:140px;width:15px;height:15px;background:#fff;border:1px solid #c5c5c5;box-sizing:border-box;"></div>
<svg class="a" style="left:1113px;top:140px" width="15" height="15"><path d="M3.3,8.6 L6.2,11.2 L12.3,4.9" fill="none" stroke="#c5c5c5" stroke-width="1.4"/></svg>
<div class="a t" style="left:1132px;top:143px;font-size:12.8px;line-height:12.8px;color:#8d8d8d;">After</div>
<div class="a t" style="left:944px;top:169px;font-size:12.8px;line-height:12.8px;color:#000;">Area</div>
<div class="a t" style="left:998px;top:169px;font-size:12.8px;line-height:12.8px;color:#000;">Asy</div>
<div class="a t" style="left:1045px;top:169px;font-size:12.8px;line-height:12.8px;color:#000;">Asz</div>
<div class="a t" style="left:1099px;top:169px;font-size:12.8px;line-height:12.8px;color:#000;">Ixx</div>
<div class="a t" style="left:1150px;top:169px;font-size:12.8px;line-height:12.8px;color:#000;">Iyy</div>
<div class="a t" style="left:1200px;top:169px;font-size:12.8px;line-height:12.8px;color:#000;">Izz</div>
<div class="a t" style="left:1243px;top:169px;font-size:12.8px;line-height:12.8px;color:#000;">Weight</div>
<div class="a t" style="left:1308px;top:169px;font-size:12.8px;line-height:12.8px;color:#000;">W</div>
<div class="a" style="left:933px;top:189px;width:50px;height:26px;background:#fff;border:1px solid #7a7a7a;box-sizing:border-box;"></div>
<div class="a t" style="left:940px;top:195px;font-size:12.8px;line-height:12.8px;color:#000;">1</div>
<div class="a" style="left:933px;top:217px;width:50px;height:25px;background:#f0f0f0;border:1px solid #cccccc;box-sizing:border-box;"></div>
<div class="a t" style="left:940px;top:223px;font-size:12.8px;line-height:12.8px;color:#8d8d8d;">1</div>
<div class="a" style="left:985px;top:189px;width:50px;height:26px;background:#fff;border:1px solid #7a7a7a;box-sizing:border-box;"></div>
<div class="a t" style="left:992px;top:195px;font-size:12.8px;line-height:12.8px;color:#000;">1</div>
<div class="a" style="left:985px;top:217px;width:50px;height:25px;background:#f0f0f0;border:1px solid #cccccc;box-sizing:border-box;"></div>
<div class="a t" style="left:992px;top:223px;font-size:12.8px;line-height:12.8px;color:#8d8d8d;">1</div>
<div class="a" style="left:1036px;top:189px;width:50px;height:26px;background:#fff;border:1px solid #7a7a7a;box-sizing:border-box;"></div>
<div class="a t" style="left:1043px;top:195px;font-size:12.8px;line-height:12.8px;color:#000;">1</div>
<div class="a" style="left:1036px;top:217px;width:50px;height:25px;background:#f0f0f0;border:1px solid #cccccc;box-sizing:border-box;"></div>
<div class="a t" style="left:1043px;top:223px;font-size:12.8px;line-height:12.8px;color:#8d8d8d;">1</div>
<div class="a" style="left:1088px;top:189px;width:50px;height:26px;background:#fff;border:1px solid #7a7a7a;box-sizing:border-box;"></div>
<div class="a t" style="left:1095px;top:195px;font-size:12.8px;line-height:12.8px;color:#000;">1</div>
<div class="a" style="left:1088px;top:217px;width:50px;height:25px;background:#f0f0f0;border:1px solid #cccccc;box-sizing:border-box;"></div>
<div class="a t" style="left:1095px;top:223px;font-size:12.8px;line-height:12.8px;color:#8d8d8d;">1</div>
<div class="a" style="left:1140px;top:189px;width:50px;height:26px;background:#fff;border:1px solid #7a7a7a;box-sizing:border-box;"></div>
<div class="a t" style="left:1147px;top:195px;font-size:12.8px;line-height:12.8px;color:#000;">1</div>
<div class="a" style="left:1140px;top:217px;width:50px;height:25px;background:#f0f0f0;border:1px solid #cccccc;box-sizing:border-box;"></div>
<div class="a t" style="left:1147px;top:223px;font-size:12.8px;line-height:12.8px;color:#8d8d8d;">1</div>
<div class="a" style="left:1192px;top:189px;width:50px;height:26px;background:#fff;border:1px solid #7a7a7a;box-sizing:border-box;"></div>
<div class="a t" style="left:1199px;top:195px;font-size:12.8px;line-height:12.8px;color:#000;">1</div>
<div class="a" style="left:1192px;top:217px;width:50px;height:25px;background:#f0f0f0;border:1px solid #cccccc;box-sizing:border-box;"></div>
<div class="a t" style="left:1199px;top:223px;font-size:12.8px;line-height:12.8px;color:#8d8d8d;">1</div>
<div class="a" style="left:1243px;top:189px;width:50px;height:26px;background:#fff;border:1px solid #7a7a7a;box-sizing:border-box;"></div>
<div class="a t" style="left:1250px;top:195px;font-size:12.8px;line-height:12.8px;color:#000;">1</div>
<div class="a" style="left:1243px;top:217px;width:50px;height:25px;background:#f0f0f0;border:1px solid #cccccc;box-sizing:border-box;"></div>
<div class="a t" style="left:1250px;top:223px;font-size:12.8px;line-height:12.8px;color:#8d8d8d;">1</div>
<div class="a" style="left:1295px;top:189px;width:50px;height:26px;background:#fff;border:1px solid #7a7a7a;box-sizing:border-box;"></div>
<div class="a t" style="left:1302px;top:195px;font-size:12.8px;line-height:12.8px;color:#000;">1</div>
<div class="a" style="left:1295px;top:217px;width:50px;height:25px;background:#f0f0f0;border:1px solid #cccccc;box-sizing:border-box;"></div>
<div class="a t" style="left:1302px;top:223px;font-size:12.8px;line-height:12.8px;color:#8d8d8d;">1</div>
<div class="a" style="left:1186px;top:259px;width:162px;height:24px;background:#e1e1e1;border:1px solid #adadad;box-sizing:border-box;"></div>
<div class="a t" style="left:1186px;top:265px;font-size:12.8px;line-height:12.8px;color:#000;width:162px;text-align:center;">Add / Replace</div>
<div class="a" style="left:1100px;top:293px;width:248px;height:141px;border-top:2px solid #696969;border-left:2px solid #696969;border-bottom:1px solid #fff;border-right:1px solid #fff;box-sizing:border-box;background:#f0f0f0"></div>
<div class="a" style="left:1102px;top:295px;width:224px;height:118px;background:#fff"></div>
<div class="a" style="left:1102px;top:295px;width:224px;height:20px;background:#f0f0f5;border-top:1px solid #fff;border-bottom:2px solid #1e1e1e;box-sizing:border-box;"></div>
<div class="a" style="left:1220px;top:295px;width:2px;height:20px;background:#1e1e1e"></div>
<div class="a t" style="left:1225px;top:299px;font-size:12.8px;line-height:12.8px;color:#000;width:104px;text-align:center;">fAsz</div>
<div class="a" style="left:1102px;top:315px;width:224px;height:19px;background:#bfe1fb;border-bottom:1px solid #6d7f8f;box-sizing:border-box;"></div>
<div class="a" style="left:1221px;top:315px;width:1px;height:19px;background:#6d7f8f"></div>
<div class="a" style="left:1326px;top:314px;width:20px;height:76px;background:#cdcdcd"></div>
<svg class="a" style="left:0;top:0" width="1" height="1"><path d="M1332.0,306.25 L1336.5,301.75 L1341.0,306.25" fill="none" stroke="#606060" stroke-width="2"/><path d="M1332.0,398.75 L1336.5,403.25 L1341.0,398.75" fill="none" stroke="#606060" stroke-width="2"/><path d="M1312.75,418.0 L1317.25,422.5 L1312.75,427.0" fill="none" stroke="#606060" stroke-width="2"/></svg>
<div class="a" style="left:917px;top:450px;width:443px;height:37px;border:1px solid #dcdcdc;box-sizing:border-box;"></div>
<svg class="a" style="left:1173.5px;top:461.5px" width="16" height="16"><circle cx="8" cy="8" r="7" fill="#fff" stroke="#333" stroke-width="1"/></svg>
<div class="a t" style="left:1192px;top:465px;font-size:12.8px;line-height:12.8px;color:#000;">Left-Bottom</div>
<div class="a" style="left:918px;top:519px;width:442px;height:287px;border-top:1px solid #fff;border-left:1px solid #fff;border-right:1px solid #696969;border-bottom:1px solid #696969;box-sizing:border-box;"></div>
<div class="a" style="left:924px;top:538px;width:427px;height:260px;border:1px solid #dcdcdc;box-sizing:border-box;"></div>
<div class="a" style="left:931px;top:546px;width:411px;height:244px;border-top:2px solid #696969;border-left:2px solid #696969;border-bottom:1px solid #f8f8f8;border-right:1px solid #f8f8f8;box-sizing:border-box;background:#fff"></div>
<div class="a" style="left:1321px;top:547px;width:20px;height:242px;background:#f0f0f0"></div>
<div class="a" style="left:1321px;top:567px;width:20px;height:200px;background:#cdcdcd"></div>
<svg class="a" style="left:0;top:0" width="1" height="1"><path d="M1326.5,560.25 L1331,555.75 L1335.5,560.25" fill="none" stroke="#606060" stroke-width="2"/><path d="M1326.5,775.25 L1331,779.75 L1335.5,775.25" fill="none" stroke="#606060" stroke-width="2"/></svg>
<div class="a" style="left:1150px;top:548px;width:105px;height:18px;background:#f8f8f8;border-right:1px solid #1e1e1e;border-bottom:2px solid #1e1e1e;box-sizing:content-box;"></div>
<div class="a t" style="left:1150px;top:549px;font-size:14px;line-height:14px;color:#000;width:100px;text-align:right;padding-right:4px;letter-spacing:0.4px">Area(m^2)</div>
<div class="a" style="left:1150px;top:568px;width:105px;height:19px;background:#bfe1fb;border-right:1px solid #6d6d6d;border-bottom:1px solid #6d6d6d;box-sizing:content-box;"></div>
<div class="a t" style="left:1150px;top:571px;font-size:14px;line-height:14px;color:#000;width:101px;text-align:right;letter-spacing:0.15px">0.001664</div>
<div class="a" style="left:1150px;top:588px;width:105px;height:19px;background:#e3e3e3;border-right:1px solid #6d6d6d;border-bottom:1px solid #6d6d6d;box-sizing:content-box;"></div>
<div class="a t" style="left:1150px;top:591px;font-size:14px;line-height:14px;color:#000;width:101px;text-align:right;letter-spacing:0.15px">0.001664</div>
<div class="a" style="left:1150px;top:608px;width:105px;height:19px;background:#e3e3e3;border-right:1px solid #6d6d6d;border-bottom:1px solid #6d6d6d;box-sizing:content-box;"></div>
<div class="a t" style="left:1150px;top:611px;font-size:14px;line-height:14px;color:#000;width:101px;text-align:right;letter-spacing:0.15px">0.001664</div>
<div class="a" style="left:1136px;top:818px;width:223px;height:24px;background:#e1e1e1;border:2px solid #0078d7;box-sizing:border-box;"></div>
<div class="a t" style="left:1136px;top:824px;font-size:13px;line-height:13px;color:#000;width:223px;text-align:center;">Show Stiffness...</div>
<div class="a" style="left:1249px;top:863px;width:111px;height:24px;background:#e1e1e1;border:1px solid #adadad;box-sizing:border-box;"></div>
<div class="a t" style="left:1249px;top:870px;font-size:12.8px;line-height:12.8px;color:#000;width:111px;text-align:center;">Close</div>
<div class="a" style="left:918px;top:271px;width:266px;height:441px;background:#f0f0f0;border:1px solid #dedede;border-bottom:0;box-sizing:border-box;"></div>
<div class="a" style="left:919px;top:272px;width:264px;height:37px;background:#fff"></div>
<div class="a t" style="left:928px;top:284px;font-size:14.5px;line-height:14.5px;color:#000;">Stiffness</div>
<svg class="a" style="left:1155px;top:284px" width="14" height="13"><path d="M0.5,0.5 L12.5,12.5 M12.5,0.5 L0.5,12.5" stroke="#222" stroke-width="1.1"/></svg>
<div class="a" style="left:928px;top:318px;width:244px;height:342px;background:#6e6e6e"></div>
<div class="a" style="left:931px;top:321px;width:64px;height:18px;background:#f0f0f5;border-bottom:2px solid #1a1a1a;border-right:2px solid #1a1a1a;border-top:1px solid #fff;border-left:1px solid #fff;box-sizing:border-box;overflow:hidden"></div>
<div class="a" style="left:995px;top:321px;width:116px;height:18px;background:#f0f0f5;border-bottom:2px solid #1a1a1a;border-right:2px solid #1a1a1a;border-top:1px solid #fff;border-left:1px solid #fff;box-sizing:border-box;overflow:hidden"></div>
<div class="a" style="left:1111px;top:321px;width:59px;height:18px;background:#f0f0f5;border-bottom:2px solid #1a1a1a;border-right:2px solid #1a1a1a;border-top:1px solid #fff;border-left:1px solid #fff;box-sizing:border-box;overflow:hidden"></div>
<div class="a t" style="left:995px;top:323px;width:115px;text-align:center;font-size:15px;line-height:15px;font-weight:bold">Stiffness</div>
<div class="a t" style="left:1111px;top:323px;width:59px;text-align:center;font-size:15px;line-height:15px;font-weight:bold">Unit</div>
<div class="a" style="left:931px;top:339px;width:64px;height:16px;background:#eeeef3;border-bottom:2px solid #1a1a1a;border-right:2px solid #1a1a1a;border-top:1px solid #fff;border-left:1px solid #fff;box-sizing:border-box;overflow:hidden"></div>
<div class="a" style="left:995px;top:339px;width:116px;height:16px;background:#e3eaf5;border-bottom:1px solid #787878;border-right:1px solid #787878;border-top:1px solid #e3eaf5;border-left:1px solid #e3eaf5;box-sizing:border-box;overflow:hidden"></div>
<div class="a" style="left:1111px;top:339px;width:59px;height:16px;background:#e3eaf5;border-bottom:1px solid #787878;border-right:0px solid #787878;border-top:1px solid #e3eaf5;border-left:1px solid #e3eaf5;box-sizing:border-box;overflow:hidden"></div>
<div class="a" style="left:931px;top:339px;width:64px;height:15px;overflow:hidden"><div class="a t" style="left:2px;top:3px;font-size:14px;line-height:14px">Area</div></div>
<div class="a" style="left:995px;top:339px;width:116px;height:15px;overflow:hidden"><div class="a t" style="right:3px;top:3px;font-size:14px;line-height:14px;letter-spacing:0.3px">1.662695e+00</div></div>
<div class="a" style="left:1111px;top:339px;width:59px;height:15px;overflow:hidden"><div class="a t" style="left:3px;top:3px;font-size:14px;line-height:14px">m&#94;2</div></div>
<div class="a" style="left:931px;top:355px;width:64px;height:16px;background:#eeeef3;border-bottom:2px solid #1a1a1a;border-right:2px solid #1a1a1a;border-top:1px solid #fff;border-left:1px solid #fff;box-sizing:border-box;overflow:hidden"></div>
<div class="a" style="left:995px;top:355px;width:116px;height:16px;background:#e3eaf5;border-bottom:1px solid #787878;border-right:1px solid #787878;border-top:1px solid #e3eaf5;border-left:1px solid #e3eaf5;box-sizing:border-box;overflow:hidden"></div>
<div class="a" style="left:1111px;top:355px;width:59px;height:16px;background:#e3eaf5;border-bottom:1px solid #787878;border-right:0px solid #787878;border-top:1px solid #e3eaf5;border-left:1px solid #e3eaf5;box-sizing:border-box;overflow:hidden"></div>
<div class="a" style="left:931px;top:355px;width:64px;height:15px;overflow:hidden"><div class="a t" style="left:2px;top:3px;font-size:14px;line-height:14px">Asy</div></div>
<div class="a" style="left:995px;top:355px;width:116px;height:15px;overflow:hidden"><div class="a t" style="right:3px;top:3px;font-size:14px;line-height:14px;letter-spacing:0.3px">1.203056e+00</div></div>
<div class="a" style="left:1111px;top:355px;width:59px;height:15px;overflow:hidden"><div class="a t" style="left:3px;top:3px;font-size:14px;line-height:14px">m&#94;2</div></div>
<div class="a" style="left:931px;top:371px;width:64px;height:16px;background:#eeeef3;border-bottom:2px solid #1a1a1a;border-right:2px solid #1a1a1a;border-top:1px solid #fff;border-left:1px solid #fff;box-sizing:border-box;overflow:hidden"></div>
<div class="a" style="left:995px;top:371px;width:116px;height:16px;background:#e3eaf5;border-bottom:1px solid #787878;border-right:1px solid #787878;border-top:1px solid #e3eaf5;border-left:1px solid #e3eaf5;box-sizing:border-box;overflow:hidden"></div>
<div class="a" style="left:1111px;top:371px;width:59px;height:16px;background:#e3eaf5;border-bottom:1px solid #787878;border-right:0px solid #787878;border-top:1px solid #e3eaf5;border-left:1px solid #e3eaf5;box-sizing:border-box;overflow:hidden"></div>
<div class="a" style="left:931px;top:371px;width:64px;height:15px;overflow:hidden"><div class="a t" style="left:2px;top:3px;font-size:14px;line-height:14px">Asz</div></div>
<div class="a" style="left:995px;top:371px;width:116px;height:15px;overflow:hidden"><div class="a t" style="right:3px;top:3px;font-size:14px;line-height:14px;letter-spacing:0.3px">1.236220e+00</div></div>
<div class="a" style="left:1111px;top:371px;width:59px;height:15px;overflow:hidden"><div class="a t" style="left:3px;top:3px;font-size:14px;line-height:14px">m&#94;2</div></div>
<div class="a" style="left:931px;top:387px;width:64px;height:16px;background:#eeeef3;border-bottom:2px solid #1a1a1a;border-right:2px solid #1a1a1a;border-top:1px solid #fff;border-left:1px solid #fff;box-sizing:border-box;overflow:hidden"></div>
<div class="a" style="left:995px;top:387px;width:116px;height:16px;background:#e3eaf5;border-bottom:1px solid #787878;border-right:1px solid #787878;border-top:1px solid #e3eaf5;border-left:1px solid #e3eaf5;box-sizing:border-box;overflow:hidden"></div>
<div class="a" style="left:1111px;top:387px;width:59px;height:16px;background:#e3eaf5;border-bottom:1px solid #787878;border-right:0px solid #787878;border-top:1px solid #e3eaf5;border-left:1px solid #e3eaf5;box-sizing:border-box;overflow:hidden"></div>
<div class="a" style="left:931px;top:387px;width:64px;height:15px;overflow:hidden"><div class="a t" style="left:2px;top:3px;font-size:14px;line-height:14px">Ixx</div></div>
<div class="a" style="left:995px;top:387px;width:116px;height:15px;overflow:hidden"><div class="a t" style="right:3px;top:3px;font-size:14px;line-height:14px;letter-spacing:0.3px">4.628444e-02</div></div>
<div class="a" style="left:1111px;top:387px;width:59px;height:15px;overflow:hidden"><div class="a t" style="left:3px;top:3px;font-size:14px;line-height:14px">m&#94;4</div></div>
<div class="a" style="left:931px;top:403px;width:64px;height:16px;background:#eeeef3;border-bottom:2px solid #1a1a1a;border-right:2px solid #1a1a1a;border-top:1px solid #fff;border-left:1px solid #fff;box-sizing:border-box;overflow:hidden"></div>
<div class="a" style="left:995px;top:403px;width:116px;height:16px;background:#e3eaf5;border-bottom:1px solid #787878;border-right:1px solid #787878;border-top:1px solid #e3eaf5;border-left:1px solid #e3eaf5;box-sizing:border-box;overflow:hidden"></div>
<div class="a" style="left:1111px;top:403px;width:59px;height:16px;background:#e3eaf5;border-bottom:1px solid #787878;border-right:0px solid #787878;border-top:1px solid #e3eaf5;border-left:1px solid #e3eaf5;box-sizing:border-box;overflow:hidden"></div>
<div class="a" style="left:931px;top:403px;width:64px;height:15px;overflow:hidden"><div class="a t" style="left:2px;top:3px;font-size:14px;line-height:14px">Iyy</div></div>
<div class="a" style="left:995px;top:403px;width:116px;height:15px;overflow:hidden"><div class="a t" style="right:3px;top:3px;font-size:14px;line-height:14px;letter-spacing:0.3px">6.943865e-01</div></div>
<div class="a" style="left:1111px;top:403px;width:59px;height:15px;overflow:hidden"><div class="a t" style="left:3px;top:3px;font-size:14px;line-height:14px">m&#94;4</div></div>
<div class="a" style="left:931px;top:419px;width:64px;height:16px;background:#eeeef3;border-bottom:2px solid #1a1a1a;border-right:2px solid #1a1a1a;border-top:1px solid #fff;border-left:1px solid #fff;box-sizing:border-box;overflow:hidden"></div>
<div class="a" style="left:995px;top:419px;width:116px;height:16px;background:#e3eaf5;border-bottom:1px solid #787878;border-right:1px solid #787878;border-top:1px solid #e3eaf5;border-left:1px solid #e3eaf5;box-sizing:border-box;overflow:hidden"></div>
<div class="a" style="left:1111px;top:419px;width:59px;height:16px;background:#e3eaf5;border-bottom:1px solid #787878;border-right:0px solid #787878;border-top:1px solid #e3eaf5;border-left:1px solid #e3eaf5;box-sizing:border-box;overflow:hidden"></div>
<div class="a" style="left:931px;top:419px;width:64px;height:15px;overflow:hidden"><div class="a t" style="left:2px;top:3px;font-size:14px;line-height:14px">Izz</div></div>
<div class="a" style="left:995px;top:419px;width:116px;height:15px;overflow:hidden"><div class="a t" style="right:3px;top:3px;font-size:14px;line-height:14px;letter-spacing:0.3px">5.748753e-01</div></div>
<div class="a" style="left:1111px;top:419px;width:59px;height:15px;overflow:hidden"><div class="a t" style="left:3px;top:3px;font-size:14px;line-height:14px">m&#94;4</div></div>
<div class="a" style="left:931px;top:435px;width:64px;height:16px;background:#eeeef3;border-bottom:2px solid #1a1a1a;border-right:2px solid #1a1a1a;border-top:1px solid #fff;border-left:1px solid #fff;box-sizing:border-box;overflow:hidden"></div>
<div class="a" style="left:995px;top:435px;width:116px;height:16px;background:#e3eaf5;border-bottom:1px solid #787878;border-right:1px solid #787878;border-top:1px solid #e3eaf5;border-left:1px solid #e3eaf5;box-sizing:border-box;overflow:hidden"></div>
<div class="a" style="left:1111px;top:435px;width:59px;height:16px;background:#e3eaf5;border-bottom:1px solid #787878;border-right:0px solid #787878;border-top:1px solid #e3eaf5;border-left:1px solid #e3eaf5;box-sizing:border-box;overflow:hidden"></div>
<div class="a" style="left:931px;top:435px;width:64px;height:15px;overflow:hidden"><div class="a t" style="left:2px;top:3px;font-size:14px;line-height:14px">Cyp</div></div>
<div class="a" style="left:995px;top:435px;width:116px;height:15px;overflow:hidden"><div class="a t" style="right:3px;top:3px;font-size:14px;line-height:14px;letter-spacing:0.3px">5.000000e-01</div></div>
<div class="a" style="left:1111px;top:435px;width:59px;height:15px;overflow:hidden"><div class="a t" style="left:3px;top:3px;font-size:14px;line-height:14px">m</div></div>
<div class="a" style="left:931px;top:451px;width:64px;height:16px;background:#eeeef3;border-bottom:2px solid #1a1a1a;border-right:2px solid #1a1a1a;border-top:1px solid #fff;border-left:1px solid #fff;box-sizing:border-box;overflow:hidden"></div>
<div class="a" style="left:995px;top:451px;width:116px;height:16px;background:#e3eaf5;border-bottom:1px solid #787878;border-right:1px solid #787878;border-top:1px solid #e3eaf5;border-left:1px solid #e3eaf5;box-sizing:border-box;overflow:hidden"></div>
<div class="a" style="left:1111px;top:451px;width:59px;height:16px;background:#e3eaf5;border-bottom:1px solid #787878;border-right:0px solid #787878;border-top:1px solid #e3eaf5;border-left:1px solid #e3eaf5;box-sizing:border-box;overflow:hidden"></div>
<div class="a" style="left:931px;top:451px;width:64px;height:15px;overflow:hidden"><div class="a t" style="left:2px;top:3px;font-size:14px;line-height:14px">Cym</div></div>
<div class="a" style="left:995px;top:451px;width:116px;height:15px;overflow:hidden"><div class="a t" style="right:3px;top:3px;font-size:14px;line-height:14px;letter-spacing:0.3px">5.000000e-01</div></div>
<div class="a" style="left:1111px;top:451px;width:59px;height:15px;overflow:hidden"><div class="a t" style="left:3px;top:3px;font-size:14px;line-height:14px">m</div></div>
<div class="a" style="left:931px;top:467px;width:64px;height:16px;background:#eeeef3;border-bottom:2px solid #1a1a1a;border-right:2px solid #1a1a1a;border-top:1px solid #fff;border-left:1px solid #fff;box-sizing:border-box;overflow:hidden"></div>
<div class="a" style="left:995px;top:467px;width:116px;height:16px;background:#e3eaf5;border-bottom:1px solid #787878;border-right:1px solid #787878;border-top:1px solid #e3eaf5;border-left:1px solid #e3eaf5;box-sizing:border-box;overflow:hidden"></div>
<div class="a" style="left:1111px;top:467px;width:59px;height:16px;background:#e3eaf5;border-bottom:1px solid #787878;border-right:0px solid #787878;border-top:1px solid #e3eaf5;border-left:1px solid #e3eaf5;box-sizing:border-box;overflow:hidden"></div>
<div class="a" style="left:931px;top:467px;width:64px;height:15px;overflow:hidden"><div class="a t" style="left:2px;top:3px;font-size:14px;line-height:14px">Czp</div></div>
<div class="a" style="left:995px;top:467px;width:116px;height:15px;overflow:hidden"><div class="a t" style="right:3px;top:3px;font-size:14px;line-height:14px;letter-spacing:0.3px">4.310936e-01</div></div>
<div class="a" style="left:1111px;top:467px;width:59px;height:15px;overflow:hidden"><div class="a t" style="left:3px;top:3px;font-size:14px;line-height:14px">m</div></div>
<div class="a" style="left:931px;top:483px;width:64px;height:16px;background:#eeeef3;border-bottom:2px solid #1a1a1a;border-right:2px solid #1a1a1a;border-top:1px solid #fff;border-left:1px solid #fff;box-sizing:border-box;overflow:hidden"></div>
<div class="a" style="left:995px;top:483px;width:116px;height:16px;background:#e3eaf5;border-bottom:1px solid #787878;border-right:1px solid #787878;border-top:1px solid #e3eaf5;border-left:1px solid #e3eaf5;box-sizing:border-box;overflow:hidden"></div>
<div class="a" style="left:1111px;top:483px;width:59px;height:16px;background:#e3eaf5;border-bottom:1px solid #787878;border-right:0px solid #787878;border-top:1px solid #e3eaf5;border-left:1px solid #e3eaf5;box-sizing:border-box;overflow:hidden"></div>
<div class="a" style="left:931px;top:483px;width:64px;height:15px;overflow:hidden"><div class="a t" style="left:2px;top:3px;font-size:14px;line-height:14px">Czm</div></div>
<div class="a" style="left:995px;top:483px;width:116px;height:15px;overflow:hidden"><div class="a t" style="right:3px;top:3px;font-size:14px;line-height:14px;letter-spacing:0.3px">1.268906e+00</div></div>
<div class="a" style="left:1111px;top:483px;width:59px;height:15px;overflow:hidden"><div class="a t" style="left:3px;top:3px;font-size:14px;line-height:14px">m</div></div>
<div class="a" style="left:931px;top:499px;width:64px;height:16px;background:#eeeef3;border-bottom:2px solid #1a1a1a;border-right:2px solid #1a1a1a;border-top:1px solid #fff;border-left:1px solid #fff;box-sizing:border-box;overflow:hidden"></div>
<div class="a" style="left:995px;top:499px;width:116px;height:16px;background:#e3eaf5;border-bottom:1px solid #787878;border-right:1px solid #787878;border-top:1px solid #e3eaf5;border-left:1px solid #e3eaf5;box-sizing:border-box;overflow:hidden"></div>
<div class="a" style="left:1111px;top:499px;width:59px;height:16px;background:#e3eaf5;border-bottom:1px solid #787878;border-right:0px solid #787878;border-top:1px solid #e3eaf5;border-left:1px solid #e3eaf5;box-sizing:border-box;overflow:hidden"></div>
<div class="a" style="left:931px;top:499px;width:64px;height:15px;overflow:hidden"><div class="a t" style="left:2px;top:3px;font-size:14px;line-height:14px">Qyb</div></div>
<div class="a" style="left:995px;top:499px;width:116px;height:15px;overflow:hidden"><div class="a t" style="right:3px;top:3px;font-size:14px;line-height:14px;letter-spacing:0.3px">0.000000e+00</div></div>
<div class="a" style="left:1111px;top:499px;width:59px;height:15px;overflow:hidden"><div class="a t" style="left:3px;top:3px;font-size:14px;line-height:14px">m&#94;2</div></div>
<div class="a" style="left:931px;top:515px;width:64px;height:16px;background:#eeeef3;border-bottom:2px solid #1a1a1a;border-right:2px solid #1a1a1a;border-top:1px solid #fff;border-left:1px solid #fff;box-sizing:border-box;overflow:hidden"></div>
<div class="a" style="left:995px;top:515px;width:116px;height:16px;background:#e3eaf5;border-bottom:1px solid #787878;border-right:1px solid #787878;border-top:1px solid #e3eaf5;border-left:1px solid #e3eaf5;box-sizing:border-box;overflow:hidden"></div>
<div class="a" style="left:1111px;top:515px;width:59px;height:16px;background:#e3eaf5;border-bottom:1px solid #787878;border-right:0px solid #787878;border-top:1px solid #e3eaf5;border-left:1px solid #e3eaf5;box-sizing:border-box;overflow:hidden"></div>
<div class="a" style="left:931px;top:515px;width:64px;height:15px;overflow:hidden"><div class="a t" style="left:2px;top:3px;font-size:14px;line-height:14px">Qzb</div></div>
<div class="a" style="left:995px;top:515px;width:116px;height:15px;overflow:hidden"><div class="a t" style="right:3px;top:3px;font-size:14px;line-height:14px;letter-spacing:0.3px">0.000000e+00</div></div>
<div class="a" style="left:1111px;top:515px;width:59px;height:15px;overflow:hidden"><div class="a t" style="left:3px;top:3px;font-size:14px;line-height:14px">m&#94;2</div></div>
<div class="a" style="left:931px;top:531px;width:64px;height:16px;background:#eeeef3;border-bottom:2px solid #1a1a1a;border-right:2px solid #1a1a1a;border-top:1px solid #fff;border-left:1px solid #fff;box-sizing:border-box;overflow:hidden"></div>
<div class="a" style="left:995px;top:531px;width:116px;height:16px;background:#e3eaf5;border-bottom:1px solid #787878;border-right:1px solid #787878;border-top:1px solid #e3eaf5;border-left:1px solid #e3eaf5;box-sizing:border-box;overflow:hidden"></div>
<div class="a" style="left:1111px;top:531px;width:59px;height:16px;background:#e3eaf5;border-bottom:1px solid #787878;border-right:0px solid #787878;border-top:1px solid #e3eaf5;border-left:1px solid #e3eaf5;box-sizing:border-box;overflow:hidden"></div>
<div class="a" style="left:931px;top:531px;width:64px;height:15px;overflow:hidden"><div class="a t" style="left:2px;top:3px;font-size:14px;line-height:14px">y1</div></div>
<div class="a" style="left:995px;top:531px;width:116px;height:15px;overflow:hidden"><div class="a t" style="right:3px;top:3px;font-size:14px;line-height:14px;letter-spacing:0.3px">-5.000000e-01</div></div>
<div class="a" style="left:1111px;top:531px;width:59px;height:15px;overflow:hidden"><div class="a t" style="left:3px;top:3px;font-size:14px;line-height:14px">m</div></div>
<div class="a" style="left:931px;top:547px;width:64px;height:16px;background:#eeeef3;border-bottom:2px solid #1a1a1a;border-right:2px solid #1a1a1a;border-top:1px solid #fff;border-left:1px solid #fff;box-sizing:border-box;overflow:hidden"></div>
<div class="a" style="left:995px;top:547px;width:116px;height:16px;background:#e3eaf5;border-bottom:1px solid #787878;border-right:1px solid #787878;border-top:1px solid #e3eaf5;border-left:1px solid #e3eaf5;box-sizing:border-box;overflow:hidden"></div>
<div class="a" style="left:1111px;top:547px;width:59px;height:16px;background:#e3eaf5;border-bottom:1px solid #787878;border-right:0px solid #787878;border-top:1px solid #e3eaf5;border-left:1px solid #e3eaf5;box-sizing:border-box;overflow:hidden"></div>
<div class="a" style="left:931px;top:547px;width:64px;height:15px;overflow:hidden"><div class="a t" style="left:2px;top:3px;font-size:14px;line-height:14px">z1</div></div>
<div class="a" style="left:995px;top:547px;width:116px;height:15px;overflow:hidden"><div class="a t" style="right:3px;top:3px;font-size:14px;line-height:14px;letter-spacing:0.3px">4.310936e-01</div></div>
<div class="a" style="left:1111px;top:547px;width:59px;height:15px;overflow:hidden"><div class="a t" style="left:3px;top:3px;font-size:14px;line-height:14px">m</div></div>
<div class="a" style="left:931px;top:563px;width:64px;height:16px;background:#eeeef3;border-bottom:2px solid #1a1a1a;border-right:2px solid #1a1a1a;border-top:1px solid #fff;border-left:1px solid #fff;box-sizing:border-box;overflow:hidden"></div>
<div class="a" style="left:995px;top:563px;width:116px;height:16px;background:#e3eaf5;border-bottom:1px solid #787878;border-right:1px solid #787878;border-top:1px solid #e3eaf5;border-left:1px solid #e3eaf5;box-sizing:border-box;overflow:hidden"></div>
<div class="a" style="left:1111px;top:563px;width:59px;height:16px;background:#e3eaf5;border-bottom:1px solid #787878;border-right:0px solid #787878;border-top:1px solid #e3eaf5;border-left:1px solid #e3eaf5;box-sizing:border-box;overflow:hidden"></div>
<div class="a" style="left:931px;top:563px;width:64px;height:15px;overflow:hidden"><div class="a t" style="left:2px;top:3px;font-size:14px;line-height:14px">y2</div></div>
<div class="a" style="left:995px;top:563px;width:116px;height:15px;overflow:hidden"><div class="a t" style="right:3px;top:3px;font-size:14px;line-height:14px;letter-spacing:0.3px">5.000000e-01</div></div>
<div class="a" style="left:1111px;top:563px;width:59px;height:15px;overflow:hidden"><div class="a t" style="left:3px;top:3px;font-size:14px;line-height:14px">m</div></div>
<div class="a" style="left:931px;top:579px;width:64px;height:16px;background:#eeeef3;border-bottom:2px solid #1a1a1a;border-right:2px solid #1a1a1a;border-top:1px solid #fff;border-left:1px solid #fff;box-sizing:border-box;overflow:hidden"></div>
<div class="a" style="left:995px;top:579px;width:116px;height:16px;background:#e3eaf5;border-bottom:1px solid #787878;border-right:1px solid #787878;border-top:1px solid #e3eaf5;border-left:1px solid #e3eaf5;box-sizing:border-box;overflow:hidden"></div>
<div class="a" style="left:1111px;top:579px;width:59px;height:16px;background:#e3eaf5;border-bottom:1px solid #787878;border-right:0px solid #787878;border-top:1px solid #e3eaf5;border-left:1px solid #e3eaf5;box-sizing:border-box;overflow:hidden"></div>
<div class="a" style="left:931px;top:579px;width:64px;height:15px;overflow:hidden"><div class="a t" style="left:2px;top:3px;font-size:14px;line-height:14px">z2</div></div>
<div class="a" style="left:995px;top:579px;width:116px;height:15px;overflow:hidden"><div class="a t" style="right:3px;top:3px;font-size:14px;line-height:14px;letter-spacing:0.3px">4.310936e-01</div></div>
<div class="a" style="left:1111px;top:579px;width:59px;height:15px;overflow:hidden"><div class="a t" style="left:3px;top:3px;font-size:14px;line-height:14px">m</div></div>
<div class="a" style="left:931px;top:595px;width:64px;height:16px;background:#eeeef3;border-bottom:2px solid #1a1a1a;border-right:2px solid #1a1a1a;border-top:1px solid #fff;border-left:1px solid #fff;box-sizing:border-box;overflow:hidden"></div>
<div class="a" style="left:995px;top:595px;width:116px;height:16px;background:#e3eaf5;border-bottom:1px solid #787878;border-right:1px solid #787878;border-top:1px solid #e3eaf5;border-left:1px solid #e3eaf5;box-sizing:border-box;overflow:hidden"></div>
<div class="a" style="left:1111px;top:595px;width:59px;height:16px;background:#e3eaf5;border-bottom:1px solid #787878;border-right:0px solid #787878;border-top:1px solid #e3eaf5;border-left:1px solid #e3eaf5;box-sizing:border-box;overflow:hidden"></div>
<div class="a" style="left:931px;top:595px;width:64px;height:15px;overflow:hidden"><div class="a t" style="left:2px;top:3px;font-size:14px;line-height:14px">y3</div></div>
<div class="a" style="left:995px;top:595px;width:116px;height:15px;overflow:hidden"><div class="a t" style="right:3px;top:3px;font-size:14px;line-height:14px;letter-spacing:0.3px">4.500000e-01</div></div>
<div class="a" style="left:1111px;top:595px;width:59px;height:15px;overflow:hidden"><div class="a t" style="left:3px;top:3px;font-size:14px;line-height:14px">m</div></div>
<div class="a" style="left:931px;top:611px;width:64px;height:16px;background:#eeeef3;border-bottom:2px solid #1a1a1a;border-right:2px solid #1a1a1a;border-top:1px solid #fff;border-left:1px solid #fff;box-sizing:border-box;overflow:hidden"></div>
<div class="a" style="left:995px;top:611px;width:116px;height:16px;background:#e3eaf5;border-bottom:1px solid #787878;border-right:1px solid #787878;border-top:1px solid #e3eaf5;border-left:1px solid #e3eaf5;box-sizing:border-box;overflow:hidden"></div>
<div class="a" style="left:1111px;top:611px;width:59px;height:16px;background:#e3eaf5;border-bottom:1px solid #787878;border-right:0px solid #787878;border-top:1px solid #e3eaf5;border-left:1px solid #e3eaf5;box-sizing:border-box;overflow:hidden"></div>
<div class="a" style="left:931px;top:611px;width:64px;height:15px;overflow:hidden"><div class="a t" style="left:2px;top:3px;font-size:14px;line-height:14px">z3</div></div>
<div class="a" style="left:995px;top:611px;width:116px;height:15px;overflow:hidden"><div class="a t" style="right:3px;top:3px;font-size:14px;line-height:14px;letter-spacing:0.3px">-1.268906e+00</div></div>
<div class="a" style="left:1111px;top:611px;width:59px;height:15px;overflow:hidden"><div class="a t" style="left:3px;top:3px;font-size:14px;line-height:14px">m</div></div>
<div class="a" style="left:931px;top:627px;width:64px;height:16px;background:#eeeef3;border-bottom:2px solid #1a1a1a;border-right:2px solid #1a1a1a;border-top:1px solid #fff;border-left:1px solid #fff;box-sizing:border-box;overflow:hidden"></div>
<div class="a" style="left:995px;top:627px;width:116px;height:16px;background:#e3eaf5;border-bottom:1px solid #787878;border-right:1px solid #787878;border-top:1px solid #e3eaf5;border-left:1px solid #e3eaf5;box-sizing:border-box;overflow:hidden"></div>
<div class="a" style="left:1111px;top:627px;width:59px;height:16px;background:#e3eaf5;border-bottom:1px solid #787878;border-right:0px solid #787878;border-top:1px solid #e3eaf5;border-left:1px solid #e3eaf5;box-sizing:border-box;overflow:hidden"></div>
<div class="a" style="left:931px;top:627px;width:64px;height:15px;overflow:hidden"><div class="a t" style="left:2px;top:3px;font-size:14px;line-height:14px">y4</div></div>
<div class="a" style="left:995px;top:627px;width:116px;height:15px;overflow:hidden"><div class="a t" style="right:3px;top:3px;font-size:14px;line-height:14px;letter-spacing:0.3px">-4.500000e-01</div></div>
<div class="a" style="left:1111px;top:627px;width:59px;height:15px;overflow:hidden"><div class="a t" style="left:3px;top:3px;font-size:14px;line-height:14px">m</div></div>
<div class="a" style="left:931px;top:643px;width:64px;height:16px;background:#eeeef3;border-bottom:2px solid #1a1a1a;border-right:2px solid #1a1a1a;border-top:1px solid #fff;border-left:1px solid #fff;box-sizing:border-box;overflow:hidden"></div>
<div class="a" style="left:995px;top:643px;width:116px;height:16px;background:#e3eaf5;border-bottom:1px solid #787878;border-right:1px solid #787878;border-top:1px solid #e3eaf5;border-left:1px solid #e3eaf5;box-sizing:border-box;overflow:hidden"></div>
<div class="a" style="left:1111px;top:643px;width:59px;height:16px;background:#e3eaf5;border-bottom:1px solid #787878;border-right:0px solid #787878;border-top:1px solid #e3eaf5;border-left:1px solid #e3eaf5;box-sizing:border-box;overflow:hidden"></div>
<div class="a" style="left:931px;top:643px;width:64px;height:15px;overflow:hidden"><div class="a t" style="left:2px;top:3px;font-size:14px;line-height:14px">z4</div></div>
<div class="a" style="left:995px;top:643px;width:116px;height:15px;overflow:hidden"><div class="a t" style="right:3px;top:3px;font-size:14px;line-height:14px;letter-spacing:0.3px">-1.268906e+00</div></div>
<div class="a" style="left:1111px;top:643px;width:59px;height:15px;overflow:hidden"><div class="a t" style="left:3px;top:3px;font-size:14px;line-height:14px">m</div></div>
<div class="a" style="left:1062px;top:670px;width:111px;height:24px;background:#e1e1e1;border:2px solid #0078d7;box-sizing:border-box;"></div>
<div class="a t" style="left:1062px;top:677px;font-size:12.8px;line-height:12.8px;color:#000;width:111px;text-align:center;">Close</div>
<div class="a" style="left:1065px;top:673px;width:105px;height:18px;border:1px dotted #000;box-sizing:border-box;"></div>
</body></html>
